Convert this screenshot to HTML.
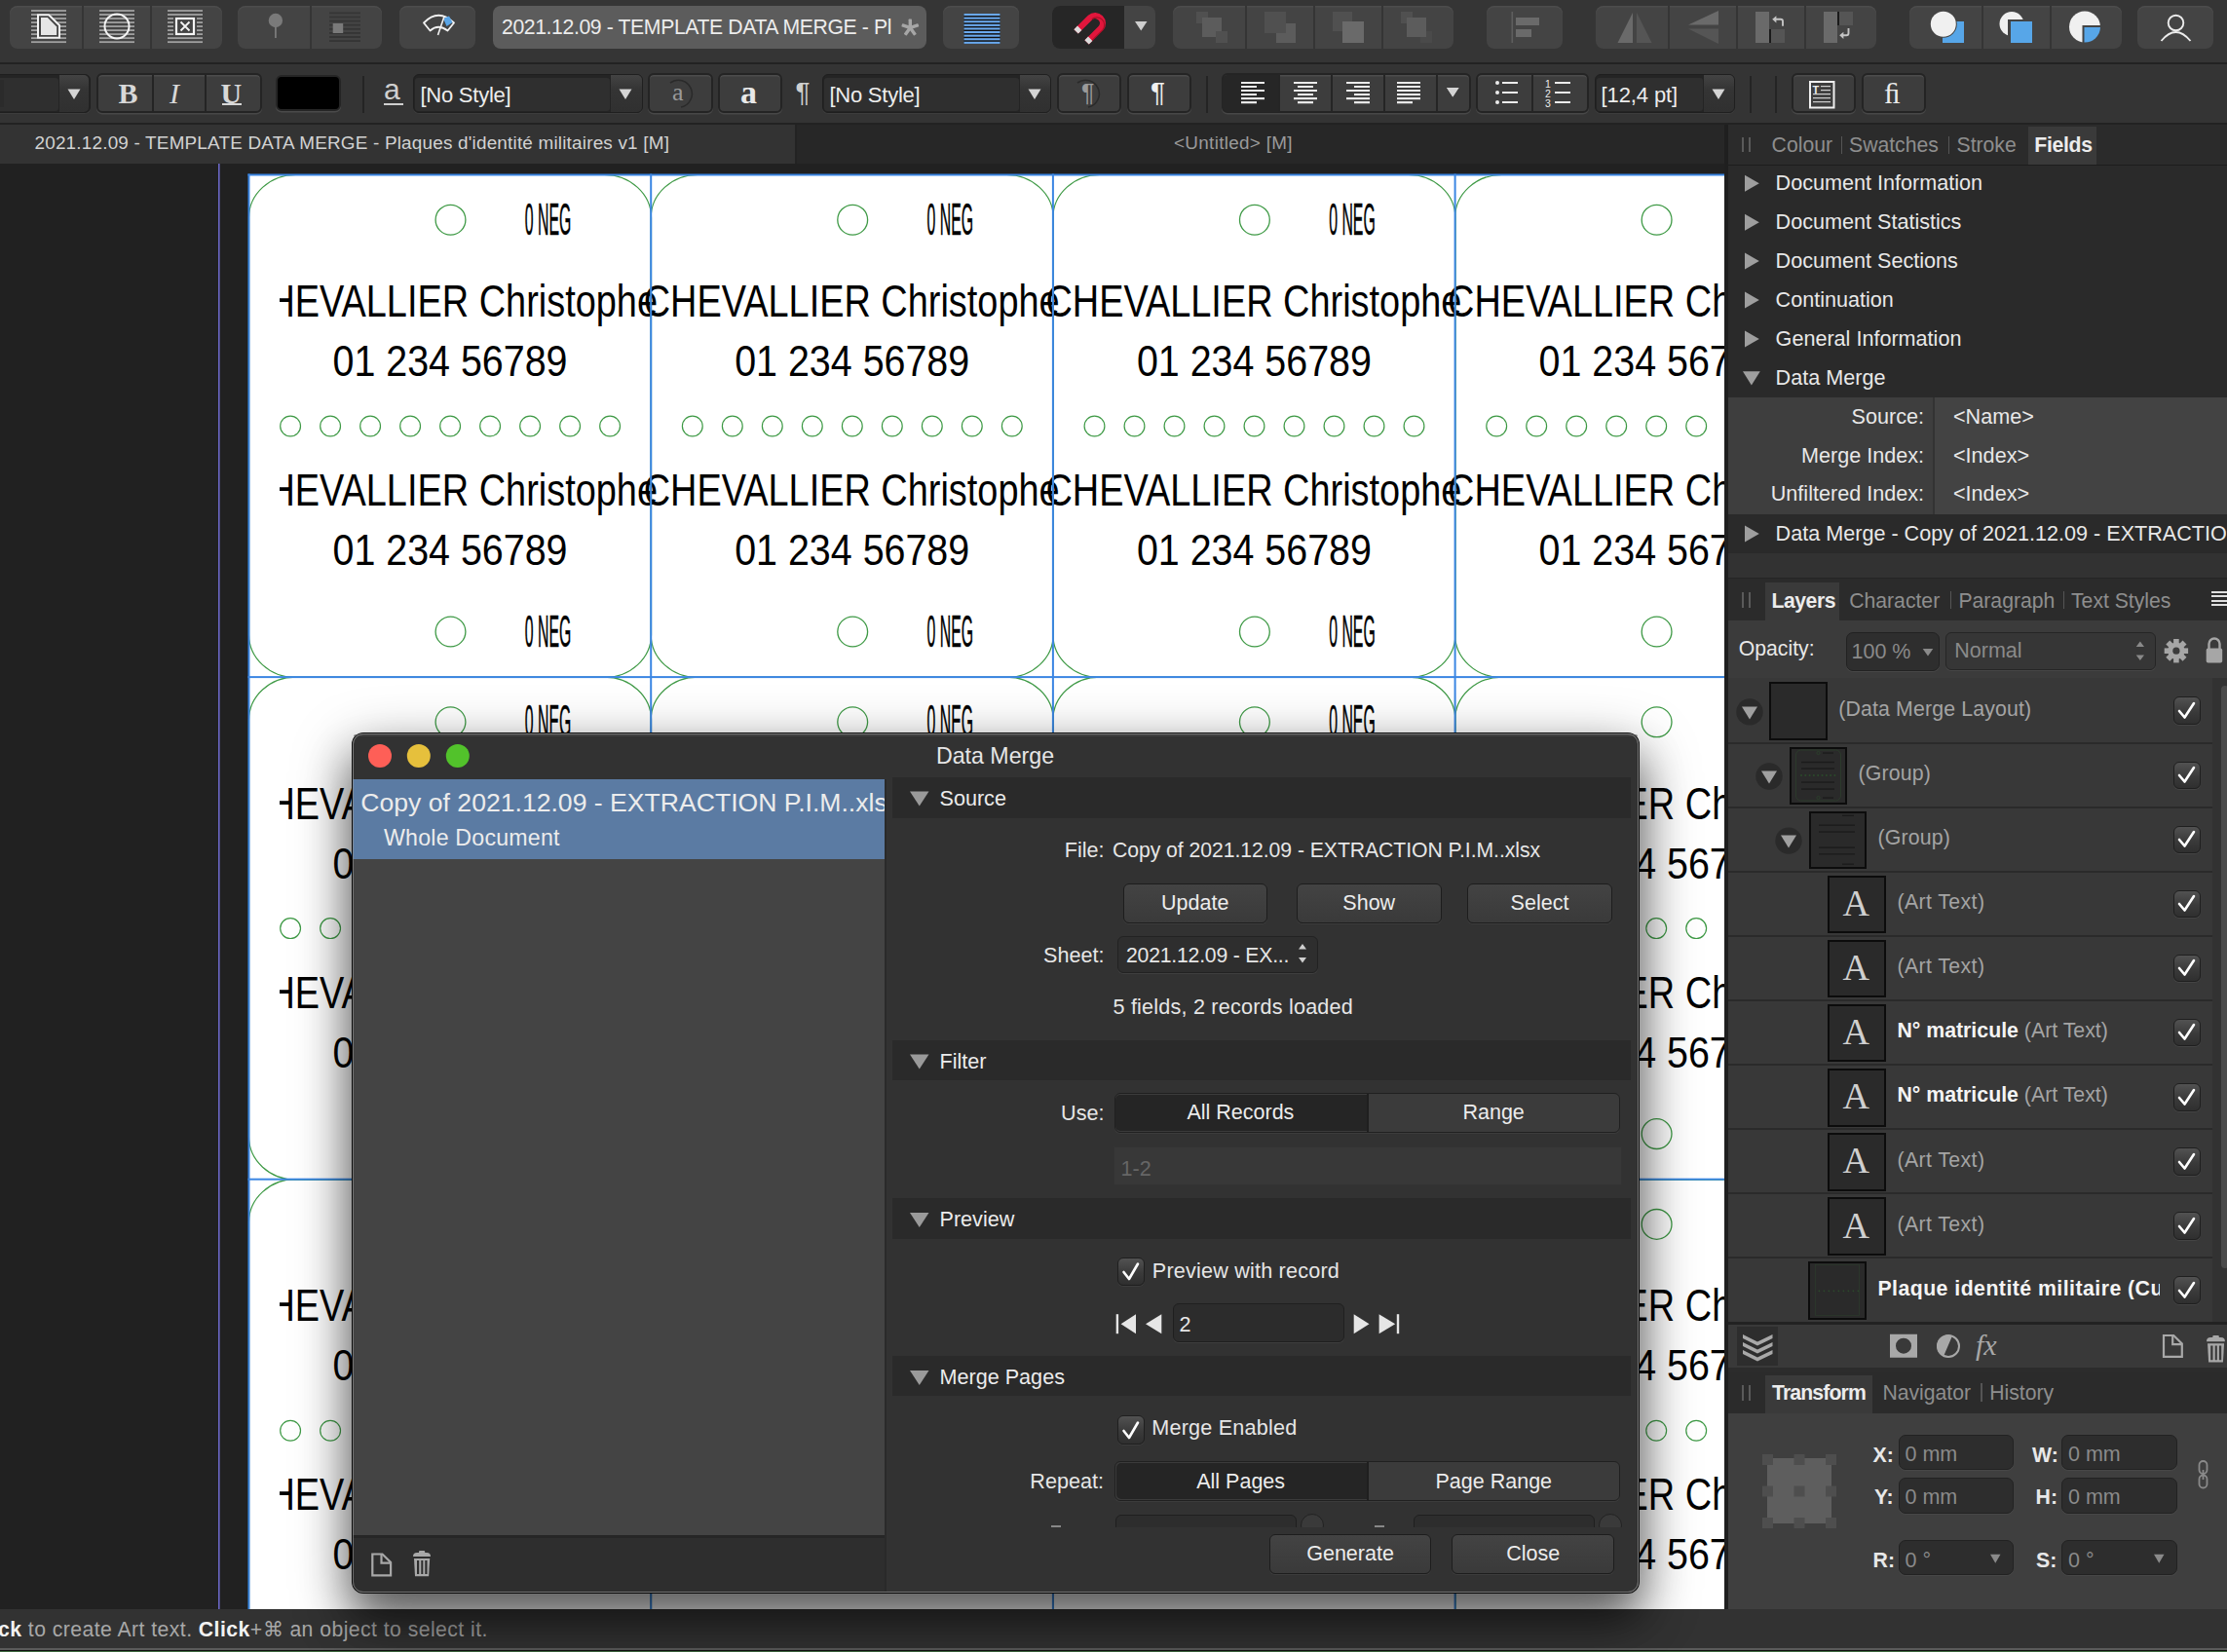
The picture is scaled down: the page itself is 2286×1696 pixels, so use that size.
<!DOCTYPE html>
<html><head><meta charset="utf-8">
<style>
*{box-sizing:border-box;margin:0;padding:0}
html,body{width:2286px;height:1696px;overflow:hidden;background:#2c2c2c;font-family:"Liberation Sans",sans-serif;color:#e6e6e6}
.a{position:absolute}
.t{position:absolute;white-space:nowrap;line-height:1}
</style></head>
<body>
<div class="a" style="left:0;top:0;width:2286px;height:64px;background:#353535"></div>
<div class="a" style="left:0;top:64px;width:2286px;height:2px;background:#222"></div>
<div class="a" style="left:0;top:66px;width:2286px;height:60px;background:#343434"></div>
<div class="a" style="left:0;top:126px;width:2286px;height:2px;background:#222"></div>
<div class="a" style="left:0;top:128px;width:1770px;height:40px;background:#272727"></div>
<div class="a" style="left:0;top:128px;width:816px;height:40px;background:#333333"></div>
<div class="a" style="left:816px;top:128px;width:2px;height:40px;background:#232323"></div>

<svg class="a" style="left:0;top:168px" width="1770" height="1484" viewBox="0 168 1770 1484" font-family="Liberation Sans">
<defs><clipPath id="c1"><rect x="287" y="0" width="2000" height="3000"/></clipPath>
</defs>
<rect x="0" y="168" width="1770" height="1484" fill="#212121"/>
<rect x="224" y="168" width="1.6" height="1484" fill="#6a66c4"/>
<rect x="255.5" y="179.5" width="1600" height="1600" fill="#fff"/>
<circle cx="462.5" cy="225.7" r="15.4" fill="none" stroke="#3f9a46" stroke-width="1.3"/>
<text x="538.8" y="240.5" font-size="45.5" textLength="47.5" lengthAdjust="spacingAndGlyphs" fill="#000" stroke="#000" stroke-width="0.5">0 NEG</text>
<g clip-path="url(#c1)">
<text x="248.0" y="325.1" font-size="46.3" textLength="427" lengthAdjust="spacingAndGlyphs" fill="#000">CHEVALLIER Christophe</text>
<text x="248.0" y="518.9" font-size="46.3" textLength="427" lengthAdjust="spacingAndGlyphs" fill="#000">CHEVALLIER Christophe</text>
</g>
<text x="341.5" y="385.9" font-size="44.5" textLength="241" lengthAdjust="spacingAndGlyphs" fill="#000">01 234 56789</text>
<text x="341.5" y="579.9" font-size="44.5" textLength="241" lengthAdjust="spacingAndGlyphs" fill="#000">01 234 56789</text>
<circle cx="298.1" cy="437.5" r="10.4" fill="none" stroke="#3f9a46" stroke-width="1.2"/>
<circle cx="339.1" cy="437.5" r="10.4" fill="none" stroke="#3f9a46" stroke-width="1.2"/>
<circle cx="380.1" cy="437.5" r="10.4" fill="none" stroke="#3f9a46" stroke-width="1.2"/>
<circle cx="421.1" cy="437.5" r="10.4" fill="none" stroke="#3f9a46" stroke-width="1.2"/>
<circle cx="462.1" cy="437.5" r="10.4" fill="none" stroke="#3f9a46" stroke-width="1.2"/>
<circle cx="503.1" cy="437.5" r="10.4" fill="none" stroke="#3f9a46" stroke-width="1.2"/>
<circle cx="544.1" cy="437.5" r="10.4" fill="none" stroke="#3f9a46" stroke-width="1.2"/>
<circle cx="585.1" cy="437.5" r="10.4" fill="none" stroke="#3f9a46" stroke-width="1.2"/>
<circle cx="626.1" cy="437.5" r="10.4" fill="none" stroke="#3f9a46" stroke-width="1.2"/>
<circle cx="462.5" cy="648.5" r="15.4" fill="none" stroke="#3f9a46" stroke-width="1.3"/>
<text x="538.8" y="663.5" font-size="45.5" textLength="47.5" lengthAdjust="spacingAndGlyphs" fill="#000" stroke="#000" stroke-width="0.5">0 NEG</text>
<rect x="255.5" y="179.5" width="413" height="516" rx="48" ry="44" fill="none" stroke="#3f9a46" stroke-width="1.2"/>
<circle cx="875.2" cy="225.7" r="15.4" fill="none" stroke="#3f9a46" stroke-width="1.3"/>
<text x="951.5" y="240.5" font-size="45.5" textLength="47.5" lengthAdjust="spacingAndGlyphs" fill="#000" stroke="#000" stroke-width="0.5">0 NEG</text>
<g>
<text x="660.7" y="325.1" font-size="46.3" textLength="427" lengthAdjust="spacingAndGlyphs" fill="#000">CHEVALLIER Christophe</text>
<text x="660.7" y="518.9" font-size="46.3" textLength="427" lengthAdjust="spacingAndGlyphs" fill="#000">CHEVALLIER Christophe</text>
</g>
<text x="754.2" y="385.9" font-size="44.5" textLength="241" lengthAdjust="spacingAndGlyphs" fill="#000">01 234 56789</text>
<text x="754.2" y="579.9" font-size="44.5" textLength="241" lengthAdjust="spacingAndGlyphs" fill="#000">01 234 56789</text>
<circle cx="710.8" cy="437.5" r="10.4" fill="none" stroke="#3f9a46" stroke-width="1.2"/>
<circle cx="751.8" cy="437.5" r="10.4" fill="none" stroke="#3f9a46" stroke-width="1.2"/>
<circle cx="792.8" cy="437.5" r="10.4" fill="none" stroke="#3f9a46" stroke-width="1.2"/>
<circle cx="833.8" cy="437.5" r="10.4" fill="none" stroke="#3f9a46" stroke-width="1.2"/>
<circle cx="874.8" cy="437.5" r="10.4" fill="none" stroke="#3f9a46" stroke-width="1.2"/>
<circle cx="915.8" cy="437.5" r="10.4" fill="none" stroke="#3f9a46" stroke-width="1.2"/>
<circle cx="956.8" cy="437.5" r="10.4" fill="none" stroke="#3f9a46" stroke-width="1.2"/>
<circle cx="997.8" cy="437.5" r="10.4" fill="none" stroke="#3f9a46" stroke-width="1.2"/>
<circle cx="1038.8" cy="437.5" r="10.4" fill="none" stroke="#3f9a46" stroke-width="1.2"/>
<circle cx="875.2" cy="648.5" r="15.4" fill="none" stroke="#3f9a46" stroke-width="1.3"/>
<text x="951.5" y="663.5" font-size="45.5" textLength="47.5" lengthAdjust="spacingAndGlyphs" fill="#000" stroke="#000" stroke-width="0.5">0 NEG</text>
<rect x="668.2" y="179.5" width="413" height="516" rx="48" ry="44" fill="none" stroke="#3f9a46" stroke-width="1.2"/>
<circle cx="1287.9" cy="225.7" r="15.4" fill="none" stroke="#3f9a46" stroke-width="1.3"/>
<text x="1364.2" y="240.5" font-size="45.5" textLength="47.5" lengthAdjust="spacingAndGlyphs" fill="#000" stroke="#000" stroke-width="0.5">0 NEG</text>
<g>
<text x="1073.4" y="325.1" font-size="46.3" textLength="427" lengthAdjust="spacingAndGlyphs" fill="#000">CHEVALLIER Christophe</text>
<text x="1073.4" y="518.9" font-size="46.3" textLength="427" lengthAdjust="spacingAndGlyphs" fill="#000">CHEVALLIER Christophe</text>
</g>
<text x="1166.9" y="385.9" font-size="44.5" textLength="241" lengthAdjust="spacingAndGlyphs" fill="#000">01 234 56789</text>
<text x="1166.9" y="579.9" font-size="44.5" textLength="241" lengthAdjust="spacingAndGlyphs" fill="#000">01 234 56789</text>
<circle cx="1123.5" cy="437.5" r="10.4" fill="none" stroke="#3f9a46" stroke-width="1.2"/>
<circle cx="1164.5" cy="437.5" r="10.4" fill="none" stroke="#3f9a46" stroke-width="1.2"/>
<circle cx="1205.5" cy="437.5" r="10.4" fill="none" stroke="#3f9a46" stroke-width="1.2"/>
<circle cx="1246.5" cy="437.5" r="10.4" fill="none" stroke="#3f9a46" stroke-width="1.2"/>
<circle cx="1287.5" cy="437.5" r="10.4" fill="none" stroke="#3f9a46" stroke-width="1.2"/>
<circle cx="1328.5" cy="437.5" r="10.4" fill="none" stroke="#3f9a46" stroke-width="1.2"/>
<circle cx="1369.5" cy="437.5" r="10.4" fill="none" stroke="#3f9a46" stroke-width="1.2"/>
<circle cx="1410.5" cy="437.5" r="10.4" fill="none" stroke="#3f9a46" stroke-width="1.2"/>
<circle cx="1451.5" cy="437.5" r="10.4" fill="none" stroke="#3f9a46" stroke-width="1.2"/>
<circle cx="1287.9" cy="648.5" r="15.4" fill="none" stroke="#3f9a46" stroke-width="1.3"/>
<text x="1364.2" y="663.5" font-size="45.5" textLength="47.5" lengthAdjust="spacingAndGlyphs" fill="#000" stroke="#000" stroke-width="0.5">0 NEG</text>
<rect x="1080.9" y="179.5" width="413" height="516" rx="48" ry="44" fill="none" stroke="#3f9a46" stroke-width="1.2"/>
<circle cx="1700.6" cy="225.7" r="15.4" fill="none" stroke="#3f9a46" stroke-width="1.3"/>
<text x="1776.8999999999999" y="240.5" font-size="45.5" textLength="47.5" lengthAdjust="spacingAndGlyphs" fill="#000" stroke="#000" stroke-width="0.5">0 NEG</text>
<g>
<text x="1486.1" y="325.1" font-size="46.3" textLength="427" lengthAdjust="spacingAndGlyphs" fill="#000">CHEVALLIER Christophe</text>
<text x="1486.1" y="518.9" font-size="46.3" textLength="427" lengthAdjust="spacingAndGlyphs" fill="#000">CHEVALLIER Christophe</text>
</g>
<text x="1579.6" y="385.9" font-size="44.5" textLength="241" lengthAdjust="spacingAndGlyphs" fill="#000">01 234 56789</text>
<text x="1579.6" y="579.9" font-size="44.5" textLength="241" lengthAdjust="spacingAndGlyphs" fill="#000">01 234 56789</text>
<circle cx="1536.2" cy="437.5" r="10.4" fill="none" stroke="#3f9a46" stroke-width="1.2"/>
<circle cx="1577.2" cy="437.5" r="10.4" fill="none" stroke="#3f9a46" stroke-width="1.2"/>
<circle cx="1618.2" cy="437.5" r="10.4" fill="none" stroke="#3f9a46" stroke-width="1.2"/>
<circle cx="1659.2" cy="437.5" r="10.4" fill="none" stroke="#3f9a46" stroke-width="1.2"/>
<circle cx="1700.2" cy="437.5" r="10.4" fill="none" stroke="#3f9a46" stroke-width="1.2"/>
<circle cx="1741.2" cy="437.5" r="10.4" fill="none" stroke="#3f9a46" stroke-width="1.2"/>
<circle cx="1782.2" cy="437.5" r="10.4" fill="none" stroke="#3f9a46" stroke-width="1.2"/>
<circle cx="1823.2" cy="437.5" r="10.4" fill="none" stroke="#3f9a46" stroke-width="1.2"/>
<circle cx="1864.2" cy="437.5" r="10.4" fill="none" stroke="#3f9a46" stroke-width="1.2"/>
<circle cx="1700.6" cy="648.5" r="15.4" fill="none" stroke="#3f9a46" stroke-width="1.3"/>
<text x="1776.8999999999999" y="663.5" font-size="45.5" textLength="47.5" lengthAdjust="spacingAndGlyphs" fill="#000" stroke="#000" stroke-width="0.5">0 NEG</text>
<rect x="1493.6" y="179.5" width="413" height="516" rx="48" ry="44" fill="none" stroke="#3f9a46" stroke-width="1.2"/>
<circle cx="462.5" cy="741.3000000000001" r="15.4" fill="none" stroke="#3f9a46" stroke-width="1.3"/>
<text x="538.8" y="756.1" font-size="45.5" textLength="47.5" lengthAdjust="spacingAndGlyphs" fill="#000" stroke="#000" stroke-width="0.5">0 NEG</text>
<g clip-path="url(#c1)">
<text x="248.0" y="840.7" font-size="46.3" textLength="427" lengthAdjust="spacingAndGlyphs" fill="#000">CHEVALLIER Christophe</text>
<text x="248.0" y="1034.5" font-size="46.3" textLength="427" lengthAdjust="spacingAndGlyphs" fill="#000">CHEVALLIER Christophe</text>
</g>
<text x="341.5" y="901.5" font-size="44.5" textLength="241" lengthAdjust="spacingAndGlyphs" fill="#000">01 234 56789</text>
<text x="341.5" y="1095.5" font-size="44.5" textLength="241" lengthAdjust="spacingAndGlyphs" fill="#000">01 234 56789</text>
<circle cx="298.1" cy="953.1" r="10.4" fill="none" stroke="#3f9a46" stroke-width="1.2"/>
<circle cx="339.1" cy="953.1" r="10.4" fill="none" stroke="#3f9a46" stroke-width="1.2"/>
<circle cx="380.1" cy="953.1" r="10.4" fill="none" stroke="#3f9a46" stroke-width="1.2"/>
<circle cx="421.1" cy="953.1" r="10.4" fill="none" stroke="#3f9a46" stroke-width="1.2"/>
<circle cx="462.1" cy="953.1" r="10.4" fill="none" stroke="#3f9a46" stroke-width="1.2"/>
<circle cx="503.1" cy="953.1" r="10.4" fill="none" stroke="#3f9a46" stroke-width="1.2"/>
<circle cx="544.1" cy="953.1" r="10.4" fill="none" stroke="#3f9a46" stroke-width="1.2"/>
<circle cx="585.1" cy="953.1" r="10.4" fill="none" stroke="#3f9a46" stroke-width="1.2"/>
<circle cx="626.1" cy="953.1" r="10.4" fill="none" stroke="#3f9a46" stroke-width="1.2"/>
<circle cx="462.5" cy="1164.1" r="15.4" fill="none" stroke="#3f9a46" stroke-width="1.3"/>
<text x="538.8" y="1179.1" font-size="45.5" textLength="47.5" lengthAdjust="spacingAndGlyphs" fill="#000" stroke="#000" stroke-width="0.5">0 NEG</text>
<rect x="255.5" y="695.1" width="413" height="516" rx="48" ry="44" fill="none" stroke="#3f9a46" stroke-width="1.2"/>
<circle cx="875.2" cy="741.3000000000001" r="15.4" fill="none" stroke="#3f9a46" stroke-width="1.3"/>
<text x="951.5" y="756.1" font-size="45.5" textLength="47.5" lengthAdjust="spacingAndGlyphs" fill="#000" stroke="#000" stroke-width="0.5">0 NEG</text>
<g>
<text x="660.7" y="840.7" font-size="46.3" textLength="427" lengthAdjust="spacingAndGlyphs" fill="#000">CHEVALLIER Christophe</text>
<text x="660.7" y="1034.5" font-size="46.3" textLength="427" lengthAdjust="spacingAndGlyphs" fill="#000">CHEVALLIER Christophe</text>
</g>
<text x="754.2" y="901.5" font-size="44.5" textLength="241" lengthAdjust="spacingAndGlyphs" fill="#000">01 234 56789</text>
<text x="754.2" y="1095.5" font-size="44.5" textLength="241" lengthAdjust="spacingAndGlyphs" fill="#000">01 234 56789</text>
<circle cx="710.8" cy="953.1" r="10.4" fill="none" stroke="#3f9a46" stroke-width="1.2"/>
<circle cx="751.8" cy="953.1" r="10.4" fill="none" stroke="#3f9a46" stroke-width="1.2"/>
<circle cx="792.8" cy="953.1" r="10.4" fill="none" stroke="#3f9a46" stroke-width="1.2"/>
<circle cx="833.8" cy="953.1" r="10.4" fill="none" stroke="#3f9a46" stroke-width="1.2"/>
<circle cx="874.8" cy="953.1" r="10.4" fill="none" stroke="#3f9a46" stroke-width="1.2"/>
<circle cx="915.8" cy="953.1" r="10.4" fill="none" stroke="#3f9a46" stroke-width="1.2"/>
<circle cx="956.8" cy="953.1" r="10.4" fill="none" stroke="#3f9a46" stroke-width="1.2"/>
<circle cx="997.8" cy="953.1" r="10.4" fill="none" stroke="#3f9a46" stroke-width="1.2"/>
<circle cx="1038.8" cy="953.1" r="10.4" fill="none" stroke="#3f9a46" stroke-width="1.2"/>
<circle cx="875.2" cy="1164.1" r="15.4" fill="none" stroke="#3f9a46" stroke-width="1.3"/>
<text x="951.5" y="1179.1" font-size="45.5" textLength="47.5" lengthAdjust="spacingAndGlyphs" fill="#000" stroke="#000" stroke-width="0.5">0 NEG</text>
<rect x="668.2" y="695.1" width="413" height="516" rx="48" ry="44" fill="none" stroke="#3f9a46" stroke-width="1.2"/>
<circle cx="1287.9" cy="741.3000000000001" r="15.4" fill="none" stroke="#3f9a46" stroke-width="1.3"/>
<text x="1364.2" y="756.1" font-size="45.5" textLength="47.5" lengthAdjust="spacingAndGlyphs" fill="#000" stroke="#000" stroke-width="0.5">0 NEG</text>
<g>
<text x="1073.4" y="840.7" font-size="46.3" textLength="427" lengthAdjust="spacingAndGlyphs" fill="#000">CHEVALLIER Christophe</text>
<text x="1073.4" y="1034.5" font-size="46.3" textLength="427" lengthAdjust="spacingAndGlyphs" fill="#000">CHEVALLIER Christophe</text>
</g>
<text x="1166.9" y="901.5" font-size="44.5" textLength="241" lengthAdjust="spacingAndGlyphs" fill="#000">01 234 56789</text>
<text x="1166.9" y="1095.5" font-size="44.5" textLength="241" lengthAdjust="spacingAndGlyphs" fill="#000">01 234 56789</text>
<circle cx="1123.5" cy="953.1" r="10.4" fill="none" stroke="#3f9a46" stroke-width="1.2"/>
<circle cx="1164.5" cy="953.1" r="10.4" fill="none" stroke="#3f9a46" stroke-width="1.2"/>
<circle cx="1205.5" cy="953.1" r="10.4" fill="none" stroke="#3f9a46" stroke-width="1.2"/>
<circle cx="1246.5" cy="953.1" r="10.4" fill="none" stroke="#3f9a46" stroke-width="1.2"/>
<circle cx="1287.5" cy="953.1" r="10.4" fill="none" stroke="#3f9a46" stroke-width="1.2"/>
<circle cx="1328.5" cy="953.1" r="10.4" fill="none" stroke="#3f9a46" stroke-width="1.2"/>
<circle cx="1369.5" cy="953.1" r="10.4" fill="none" stroke="#3f9a46" stroke-width="1.2"/>
<circle cx="1410.5" cy="953.1" r="10.4" fill="none" stroke="#3f9a46" stroke-width="1.2"/>
<circle cx="1451.5" cy="953.1" r="10.4" fill="none" stroke="#3f9a46" stroke-width="1.2"/>
<circle cx="1287.9" cy="1164.1" r="15.4" fill="none" stroke="#3f9a46" stroke-width="1.3"/>
<text x="1364.2" y="1179.1" font-size="45.5" textLength="47.5" lengthAdjust="spacingAndGlyphs" fill="#000" stroke="#000" stroke-width="0.5">0 NEG</text>
<rect x="1080.9" y="695.1" width="413" height="516" rx="48" ry="44" fill="none" stroke="#3f9a46" stroke-width="1.2"/>
<circle cx="1700.6" cy="741.3000000000001" r="15.4" fill="none" stroke="#3f9a46" stroke-width="1.3"/>
<text x="1776.8999999999999" y="756.1" font-size="45.5" textLength="47.5" lengthAdjust="spacingAndGlyphs" fill="#000" stroke="#000" stroke-width="0.5">0 NEG</text>
<g>
<text x="1486.1" y="840.7" font-size="46.3" textLength="427" lengthAdjust="spacingAndGlyphs" fill="#000">CHEVALLIER Christophe</text>
<text x="1486.1" y="1034.5" font-size="46.3" textLength="427" lengthAdjust="spacingAndGlyphs" fill="#000">CHEVALLIER Christophe</text>
</g>
<text x="1579.6" y="901.5" font-size="44.5" textLength="241" lengthAdjust="spacingAndGlyphs" fill="#000">01 234 56789</text>
<text x="1579.6" y="1095.5" font-size="44.5" textLength="241" lengthAdjust="spacingAndGlyphs" fill="#000">01 234 56789</text>
<circle cx="1536.2" cy="953.1" r="10.4" fill="none" stroke="#3f9a46" stroke-width="1.2"/>
<circle cx="1577.2" cy="953.1" r="10.4" fill="none" stroke="#3f9a46" stroke-width="1.2"/>
<circle cx="1618.2" cy="953.1" r="10.4" fill="none" stroke="#3f9a46" stroke-width="1.2"/>
<circle cx="1659.2" cy="953.1" r="10.4" fill="none" stroke="#3f9a46" stroke-width="1.2"/>
<circle cx="1700.2" cy="953.1" r="10.4" fill="none" stroke="#3f9a46" stroke-width="1.2"/>
<circle cx="1741.2" cy="953.1" r="10.4" fill="none" stroke="#3f9a46" stroke-width="1.2"/>
<circle cx="1782.2" cy="953.1" r="10.4" fill="none" stroke="#3f9a46" stroke-width="1.2"/>
<circle cx="1823.2" cy="953.1" r="10.4" fill="none" stroke="#3f9a46" stroke-width="1.2"/>
<circle cx="1864.2" cy="953.1" r="10.4" fill="none" stroke="#3f9a46" stroke-width="1.2"/>
<circle cx="1700.6" cy="1164.1" r="15.4" fill="none" stroke="#3f9a46" stroke-width="1.3"/>
<text x="1776.8999999999999" y="1179.1" font-size="45.5" textLength="47.5" lengthAdjust="spacingAndGlyphs" fill="#000" stroke="#000" stroke-width="0.5">0 NEG</text>
<rect x="1493.6" y="695.1" width="413" height="516" rx="48" ry="44" fill="none" stroke="#3f9a46" stroke-width="1.2"/>
<circle cx="462.5" cy="1256.9" r="15.4" fill="none" stroke="#3f9a46" stroke-width="1.3"/>
<text x="538.8" y="1271.7" font-size="45.5" textLength="47.5" lengthAdjust="spacingAndGlyphs" fill="#000" stroke="#000" stroke-width="0.5">0 NEG</text>
<g clip-path="url(#c1)">
<text x="248.0" y="1356.3" font-size="46.3" textLength="427" lengthAdjust="spacingAndGlyphs" fill="#000">CHEVALLIER Christophe</text>
<text x="248.0" y="1550.1" font-size="46.3" textLength="427" lengthAdjust="spacingAndGlyphs" fill="#000">CHEVALLIER Christophe</text>
</g>
<text x="341.5" y="1417.1000000000001" font-size="44.5" textLength="241" lengthAdjust="spacingAndGlyphs" fill="#000">01 234 56789</text>
<text x="341.5" y="1611.1" font-size="44.5" textLength="241" lengthAdjust="spacingAndGlyphs" fill="#000">01 234 56789</text>
<circle cx="298.1" cy="1468.7" r="10.4" fill="none" stroke="#3f9a46" stroke-width="1.2"/>
<circle cx="339.1" cy="1468.7" r="10.4" fill="none" stroke="#3f9a46" stroke-width="1.2"/>
<circle cx="380.1" cy="1468.7" r="10.4" fill="none" stroke="#3f9a46" stroke-width="1.2"/>
<circle cx="421.1" cy="1468.7" r="10.4" fill="none" stroke="#3f9a46" stroke-width="1.2"/>
<circle cx="462.1" cy="1468.7" r="10.4" fill="none" stroke="#3f9a46" stroke-width="1.2"/>
<circle cx="503.1" cy="1468.7" r="10.4" fill="none" stroke="#3f9a46" stroke-width="1.2"/>
<circle cx="544.1" cy="1468.7" r="10.4" fill="none" stroke="#3f9a46" stroke-width="1.2"/>
<circle cx="585.1" cy="1468.7" r="10.4" fill="none" stroke="#3f9a46" stroke-width="1.2"/>
<circle cx="626.1" cy="1468.7" r="10.4" fill="none" stroke="#3f9a46" stroke-width="1.2"/>
<circle cx="462.5" cy="1679.7" r="15.4" fill="none" stroke="#3f9a46" stroke-width="1.3"/>
<text x="538.8" y="1694.7" font-size="45.5" textLength="47.5" lengthAdjust="spacingAndGlyphs" fill="#000" stroke="#000" stroke-width="0.5">0 NEG</text>
<rect x="255.5" y="1210.7" width="413" height="516" rx="48" ry="44" fill="none" stroke="#3f9a46" stroke-width="1.2"/>
<circle cx="875.2" cy="1256.9" r="15.4" fill="none" stroke="#3f9a46" stroke-width="1.3"/>
<text x="951.5" y="1271.7" font-size="45.5" textLength="47.5" lengthAdjust="spacingAndGlyphs" fill="#000" stroke="#000" stroke-width="0.5">0 NEG</text>
<g>
<text x="660.7" y="1356.3" font-size="46.3" textLength="427" lengthAdjust="spacingAndGlyphs" fill="#000">CHEVALLIER Christophe</text>
<text x="660.7" y="1550.1" font-size="46.3" textLength="427" lengthAdjust="spacingAndGlyphs" fill="#000">CHEVALLIER Christophe</text>
</g>
<text x="754.2" y="1417.1000000000001" font-size="44.5" textLength="241" lengthAdjust="spacingAndGlyphs" fill="#000">01 234 56789</text>
<text x="754.2" y="1611.1" font-size="44.5" textLength="241" lengthAdjust="spacingAndGlyphs" fill="#000">01 234 56789</text>
<circle cx="710.8" cy="1468.7" r="10.4" fill="none" stroke="#3f9a46" stroke-width="1.2"/>
<circle cx="751.8" cy="1468.7" r="10.4" fill="none" stroke="#3f9a46" stroke-width="1.2"/>
<circle cx="792.8" cy="1468.7" r="10.4" fill="none" stroke="#3f9a46" stroke-width="1.2"/>
<circle cx="833.8" cy="1468.7" r="10.4" fill="none" stroke="#3f9a46" stroke-width="1.2"/>
<circle cx="874.8" cy="1468.7" r="10.4" fill="none" stroke="#3f9a46" stroke-width="1.2"/>
<circle cx="915.8" cy="1468.7" r="10.4" fill="none" stroke="#3f9a46" stroke-width="1.2"/>
<circle cx="956.8" cy="1468.7" r="10.4" fill="none" stroke="#3f9a46" stroke-width="1.2"/>
<circle cx="997.8" cy="1468.7" r="10.4" fill="none" stroke="#3f9a46" stroke-width="1.2"/>
<circle cx="1038.8" cy="1468.7" r="10.4" fill="none" stroke="#3f9a46" stroke-width="1.2"/>
<circle cx="875.2" cy="1679.7" r="15.4" fill="none" stroke="#3f9a46" stroke-width="1.3"/>
<text x="951.5" y="1694.7" font-size="45.5" textLength="47.5" lengthAdjust="spacingAndGlyphs" fill="#000" stroke="#000" stroke-width="0.5">0 NEG</text>
<rect x="668.2" y="1210.7" width="413" height="516" rx="48" ry="44" fill="none" stroke="#3f9a46" stroke-width="1.2"/>
<circle cx="1287.9" cy="1256.9" r="15.4" fill="none" stroke="#3f9a46" stroke-width="1.3"/>
<text x="1364.2" y="1271.7" font-size="45.5" textLength="47.5" lengthAdjust="spacingAndGlyphs" fill="#000" stroke="#000" stroke-width="0.5">0 NEG</text>
<g>
<text x="1073.4" y="1356.3" font-size="46.3" textLength="427" lengthAdjust="spacingAndGlyphs" fill="#000">CHEVALLIER Christophe</text>
<text x="1073.4" y="1550.1" font-size="46.3" textLength="427" lengthAdjust="spacingAndGlyphs" fill="#000">CHEVALLIER Christophe</text>
</g>
<text x="1166.9" y="1417.1000000000001" font-size="44.5" textLength="241" lengthAdjust="spacingAndGlyphs" fill="#000">01 234 56789</text>
<text x="1166.9" y="1611.1" font-size="44.5" textLength="241" lengthAdjust="spacingAndGlyphs" fill="#000">01 234 56789</text>
<circle cx="1123.5" cy="1468.7" r="10.4" fill="none" stroke="#3f9a46" stroke-width="1.2"/>
<circle cx="1164.5" cy="1468.7" r="10.4" fill="none" stroke="#3f9a46" stroke-width="1.2"/>
<circle cx="1205.5" cy="1468.7" r="10.4" fill="none" stroke="#3f9a46" stroke-width="1.2"/>
<circle cx="1246.5" cy="1468.7" r="10.4" fill="none" stroke="#3f9a46" stroke-width="1.2"/>
<circle cx="1287.5" cy="1468.7" r="10.4" fill="none" stroke="#3f9a46" stroke-width="1.2"/>
<circle cx="1328.5" cy="1468.7" r="10.4" fill="none" stroke="#3f9a46" stroke-width="1.2"/>
<circle cx="1369.5" cy="1468.7" r="10.4" fill="none" stroke="#3f9a46" stroke-width="1.2"/>
<circle cx="1410.5" cy="1468.7" r="10.4" fill="none" stroke="#3f9a46" stroke-width="1.2"/>
<circle cx="1451.5" cy="1468.7" r="10.4" fill="none" stroke="#3f9a46" stroke-width="1.2"/>
<circle cx="1287.9" cy="1679.7" r="15.4" fill="none" stroke="#3f9a46" stroke-width="1.3"/>
<text x="1364.2" y="1694.7" font-size="45.5" textLength="47.5" lengthAdjust="spacingAndGlyphs" fill="#000" stroke="#000" stroke-width="0.5">0 NEG</text>
<rect x="1080.9" y="1210.7" width="413" height="516" rx="48" ry="44" fill="none" stroke="#3f9a46" stroke-width="1.2"/>
<circle cx="1700.6" cy="1256.9" r="15.4" fill="none" stroke="#3f9a46" stroke-width="1.3"/>
<text x="1776.8999999999999" y="1271.7" font-size="45.5" textLength="47.5" lengthAdjust="spacingAndGlyphs" fill="#000" stroke="#000" stroke-width="0.5">0 NEG</text>
<g>
<text x="1486.1" y="1356.3" font-size="46.3" textLength="427" lengthAdjust="spacingAndGlyphs" fill="#000">CHEVALLIER Christophe</text>
<text x="1486.1" y="1550.1" font-size="46.3" textLength="427" lengthAdjust="spacingAndGlyphs" fill="#000">CHEVALLIER Christophe</text>
</g>
<text x="1579.6" y="1417.1000000000001" font-size="44.5" textLength="241" lengthAdjust="spacingAndGlyphs" fill="#000">01 234 56789</text>
<text x="1579.6" y="1611.1" font-size="44.5" textLength="241" lengthAdjust="spacingAndGlyphs" fill="#000">01 234 56789</text>
<circle cx="1536.2" cy="1468.7" r="10.4" fill="none" stroke="#3f9a46" stroke-width="1.2"/>
<circle cx="1577.2" cy="1468.7" r="10.4" fill="none" stroke="#3f9a46" stroke-width="1.2"/>
<circle cx="1618.2" cy="1468.7" r="10.4" fill="none" stroke="#3f9a46" stroke-width="1.2"/>
<circle cx="1659.2" cy="1468.7" r="10.4" fill="none" stroke="#3f9a46" stroke-width="1.2"/>
<circle cx="1700.2" cy="1468.7" r="10.4" fill="none" stroke="#3f9a46" stroke-width="1.2"/>
<circle cx="1741.2" cy="1468.7" r="10.4" fill="none" stroke="#3f9a46" stroke-width="1.2"/>
<circle cx="1782.2" cy="1468.7" r="10.4" fill="none" stroke="#3f9a46" stroke-width="1.2"/>
<circle cx="1823.2" cy="1468.7" r="10.4" fill="none" stroke="#3f9a46" stroke-width="1.2"/>
<circle cx="1864.2" cy="1468.7" r="10.4" fill="none" stroke="#3f9a46" stroke-width="1.2"/>
<circle cx="1700.6" cy="1679.7" r="15.4" fill="none" stroke="#3f9a46" stroke-width="1.3"/>
<text x="1776.8999999999999" y="1694.7" font-size="45.5" textLength="47.5" lengthAdjust="spacingAndGlyphs" fill="#000" stroke="#000" stroke-width="0.5">0 NEG</text>
<rect x="1493.6" y="1210.7" width="413" height="516" rx="48" ry="44" fill="none" stroke="#3f9a46" stroke-width="1.2"/>
<rect x="254.5" y="178.5" width="2" height="1600" fill="#3b86e3"/>
<rect x="667.2" y="178.5" width="2" height="1600" fill="#3b86e3"/>
<rect x="1079.9" y="178.5" width="2" height="1600" fill="#3b86e3"/>
<rect x="1492.6" y="178.5" width="2" height="1600" fill="#3b86e3"/>
<rect x="254.5" y="178.5" width="1600" height="2" fill="#3b86e3"/>
<rect x="254.5" y="694.1" width="1600" height="2" fill="#3b86e3"/>
<rect x="254.5" y="1209.7" width="1600" height="2" fill="#3b86e3"/>
</svg>
<div class="a" style="left:10px;top:6px;width:218px;height:43.5px;background:#444444;border-radius:8px;box-shadow:inset 0 1.5px 0 #4c4c4c"></div>
<div class="a" style="left:84px;top:6px;width:2px;height:43.5px;background:#353535;border-radius:0px;"></div>
<div class="a" style="left:154px;top:6px;width:2px;height:43.5px;background:#353535;border-radius:0px;"></div>
<div class="a" style="left:244px;top:6px;width:148px;height:43.5px;background:#444444;border-radius:8px;box-shadow:inset 0 1.5px 0 #4c4c4c"></div>
<div class="a" style="left:318px;top:6px;width:2px;height:43.5px;background:#353535;border-radius:0px;"></div>
<div class="a" style="left:410px;top:6px;width:78px;height:43.5px;background:#444444;border-radius:8px;box-shadow:inset 0 1.5px 0 #4c4c4c"></div>
<div class="a" style="left:506px;top:6px;width:445px;height:43.5px;background:#5c5c5c;border-radius:8px;"></div>
<div class="t" style="left:515px;top:17.35px;font-size:21.2px;color:#ececec;font-weight:normal;letter-spacing:-0.38px">2021.12.09 - TEMPLATE DATA MERGE - Pl</div>
<svg class="a" style="left:920px;top:14px;" width="30" height="30" viewBox="920 14 30 30"><rect x="932.6" y="19.5" width="3.4" height="9.5" rx="0.8" fill="#a6a6a6" transform="rotate(0 934.3 28.5)"/><rect x="932.6" y="19.5" width="3.4" height="9.5" rx="0.8" fill="#a6a6a6" transform="rotate(72 934.3 28.5)"/><rect x="932.6" y="19.5" width="3.4" height="9.5" rx="0.8" fill="#a6a6a6" transform="rotate(144 934.3 28.5)"/><rect x="932.6" y="19.5" width="3.4" height="9.5" rx="0.8" fill="#a6a6a6" transform="rotate(216 934.3 28.5)"/><rect x="932.6" y="19.5" width="3.4" height="9.5" rx="0.8" fill="#a6a6a6" transform="rotate(288 934.3 28.5)"/></svg>
<div class="a" style="left:968px;top:6px;width:78px;height:43.5px;background:#444444;border-radius:8px;box-shadow:inset 0 1.5px 0 #4c4c4c"></div>
<div class="a" style="left:1080px;top:6px;width:106px;height:43.5px;background:#444444;border-radius:8px;"></div>
<div class="a" style="left:1080px;top:6px;width:74px;height:43.5px;background:#262626;border-radius:8px;border-top-right-radius:0;border-bottom-right-radius:0"></div>
<div class="a" style="left:1204px;top:6px;width:288px;height:43.5px;background:#444444;border-radius:8px;box-shadow:inset 0 1.5px 0 #4c4c4c"></div>
<div class="a" style="left:1277.5px;top:6px;width:2.0px;height:43.5px;background:#353535;border-radius:0px;"></div>
<div class="a" style="left:1347.5px;top:6px;width:2.0px;height:43.5px;background:#353535;border-radius:0px;"></div>
<div class="a" style="left:1417.5px;top:6px;width:2.0px;height:43.5px;background:#353535;border-radius:0px;"></div>
<div class="a" style="left:1526px;top:6px;width:78px;height:43.5px;background:#444444;border-radius:8px;box-shadow:inset 0 1.5px 0 #4c4c4c"></div>
<div class="a" style="left:1638px;top:6px;width:288px;height:43.5px;background:#444444;border-radius:8px;box-shadow:inset 0 1.5px 0 #4c4c4c"></div>
<div class="a" style="left:1712px;top:6px;width:2px;height:43.5px;background:#353535;border-radius:0px;"></div>
<div class="a" style="left:1782px;top:6px;width:2px;height:43.5px;background:#353535;border-radius:0px;"></div>
<div class="a" style="left:1852px;top:6px;width:2px;height:43.5px;background:#353535;border-radius:0px;"></div>
<div class="a" style="left:1960px;top:6px;width:218px;height:43.5px;background:#444444;border-radius:8px;box-shadow:inset 0 1.5px 0 #4c4c4c"></div>
<div class="a" style="left:2034px;top:6px;width:2px;height:43.5px;background:#353535;border-radius:0px;"></div>
<div class="a" style="left:2104px;top:6px;width:2px;height:43.5px;background:#353535;border-radius:0px;"></div>
<div class="a" style="left:2194px;top:6px;width:78px;height:43.5px;background:#444444;border-radius:8px;box-shadow:inset 0 1.5px 0 #4c4c4c"></div>
<svg class="a" style="left:0px;top:0px;" width="2286" height="64" viewBox="0 0 2286 64"><rect x="32" y="10.10" width="36" height="1.8" fill="#a0a0a0"/><rect x="32" y="14.12" width="36" height="1.8" fill="#a0a0a0"/><rect x="32" y="18.14" width="36" height="1.8" fill="#a0a0a0"/><rect x="32" y="22.16" width="36" height="1.8" fill="#a0a0a0"/><rect x="32" y="26.18" width="36" height="1.8" fill="#a0a0a0"/><rect x="32" y="30.20" width="36" height="1.8" fill="#a0a0a0"/><rect x="32" y="34.22" width="36" height="1.8" fill="#a0a0a0"/><rect x="32" y="38.24" width="36" height="1.8" fill="#a0a0a0"/><rect x="32" y="42.26" width="36" height="1.8" fill="#a0a0a0"/><rect x="102" y="10.10" width="36" height="1.8" fill="#a0a0a0"/><rect x="102" y="14.12" width="36" height="1.8" fill="#a0a0a0"/><rect x="102" y="18.14" width="36" height="1.8" fill="#a0a0a0"/><rect x="102" y="22.16" width="36" height="1.8" fill="#a0a0a0"/><rect x="102" y="26.18" width="36" height="1.8" fill="#a0a0a0"/><rect x="102" y="30.20" width="36" height="1.8" fill="#a0a0a0"/><rect x="102" y="34.22" width="36" height="1.8" fill="#a0a0a0"/><rect x="102" y="38.24" width="36" height="1.8" fill="#a0a0a0"/><rect x="102" y="42.26" width="36" height="1.8" fill="#a0a0a0"/><rect x="172" y="10.10" width="36" height="1.8" fill="#a0a0a0"/><rect x="172" y="14.12" width="36" height="1.8" fill="#a0a0a0"/><rect x="172" y="18.14" width="36" height="1.8" fill="#a0a0a0"/><rect x="172" y="22.16" width="36" height="1.8" fill="#a0a0a0"/><rect x="172" y="26.18" width="36" height="1.8" fill="#a0a0a0"/><rect x="172" y="30.20" width="36" height="1.8" fill="#a0a0a0"/><rect x="172" y="34.22" width="36" height="1.8" fill="#a0a0a0"/><rect x="172" y="38.24" width="36" height="1.8" fill="#a0a0a0"/><rect x="172" y="42.26" width="36" height="1.8" fill="#a0a0a0"/><path d="M38 14.2 H50.5 L62 25.6 V39.7 H38 Z" fill="#444"/><path d="M39 15.2 H50.1 L61 26 V38.7 H39 Z" fill="none" stroke="#f4f4f4" stroke-width="2"/><path d="M42 18 H48.8 L58.2 27.4 V35.9 H42 Z" fill="#e6e6e6"/><circle cx="120" cy="26.9" r="12.5" fill="none" stroke="#f4f4f4" stroke-width="2"/><rect x="178" y="16" width="24" height="22" fill="#444"/><rect x="181" y="19" width="18" height="16" fill="#444" stroke="#f4f4f4" stroke-width="2.2"/><path d="M185.5 22.5 L194.5 31.5 M194.5 22.5 L185.5 31.5" stroke="#f4f4f4" stroke-width="1.8"/><circle cx="282.9" cy="21" r="7.2" fill="#7a7a7a"/><rect x="282" y="26" width="1.8" height="13" fill="#7a7a7a"/><rect x="338" y="12.50" width="32" height="1.8" fill="#353535"/><rect x="338" y="16.60" width="32" height="1.8" fill="#353535"/><rect x="338" y="20.70" width="32" height="1.8" fill="#353535"/><rect x="338" y="24.80" width="32" height="1.8" fill="#353535"/><rect x="338" y="28.90" width="32" height="1.8" fill="#353535"/><rect x="338" y="33.00" width="32" height="1.8" fill="#353535"/><rect x="338" y="37.10" width="32" height="1.8" fill="#353535"/><rect x="338" y="41.20" width="32" height="1.8" fill="#353535"/><rect x="341.7" y="24" width="10.5" height="10" fill="#7a7a7a"/><path d="M435 23.5 Q450 8 466 23.5 L459.5 31.5 Q450 24 441.5 31.5 Z" fill="none" stroke="#f2f2f2" stroke-width="1.8" stroke-linejoin="round"/><path d="M455 19 L461 16.5 L464.5 23 L458.5 27 Z" fill="#5aa5e6"/><path d="M449.5 36 L456 17" stroke="#f2f2f2" stroke-width="1.6"/><rect x="989.5" y="14" width="37" height="31" fill="#111"/><rect x="989.5" y="14.00" width="37.0" height="2.1" fill="#6aa9ee"/><rect x="989.5" y="17.60" width="37.0" height="2.1" fill="#6aa9ee"/><rect x="989.5" y="21.20" width="37.0" height="2.1" fill="#6aa9ee"/><rect x="989.5" y="24.80" width="37.0" height="2.1" fill="#6aa9ee"/><rect x="989.5" y="28.40" width="37.0" height="2.1" fill="#6aa9ee"/><rect x="989.5" y="32.00" width="37.0" height="2.1" fill="#6aa9ee"/><rect x="989.5" y="35.60" width="37.0" height="2.1" fill="#6aa9ee"/><rect x="989.5" y="39.20" width="37.0" height="2.1" fill="#6aa9ee"/><rect x="989.5" y="42.80" width="37.0" height="2.1" fill="#6aa9ee"/><path d="M1104.6 32.4 L1119 18 A7.8 7.8 0 0 1 1130 29 L1115.6 43.4" fill="none" stroke="#e2163c" stroke-width="6.2"/><path d="M1119 18 A7.8 7.8 0 0 1 1130 29 L1115.6 43.4" fill="none" stroke="#9a0e22" stroke-width="1.2" transform="translate(1.8,1.8)" opacity="0.8"/><path d="M1104.6 32.4 L1108.2 28.8 M1115.6 43.4 L1119.2 39.8" stroke="#dcdcdc" stroke-width="6.2"/><path d="M1165 22 H1177.5 L1171.25 31.5 Z" fill="#cfcfcf"/><rect x="1228" y="12" width="12" height="12" fill="#505050"/><rect x="1234" y="18" width="20" height="20" fill="#5c5c5c"/><rect x="1248" y="32" width="12" height="12" fill="#505050"/><rect x="1298" y="12" width="22" height="22" fill="#505050"/><rect x="1310" y="24" width="20" height="20" fill="#5c5c5c"/><rect x="1310" y="24" width="10" height="10" fill="#444"/><rect x="1298" y="12" width="22" height="22" fill="#505050"/><rect x="1368" y="12" width="20" height="20" fill="#505050"/><rect x="1378" y="22" width="22" height="22" fill="#6a6a6a"/><rect x="1438" y="12" width="12" height="12" fill="#505050"/><rect x="1444" y="18" width="20" height="20" fill="#5c5c5c"/><rect x="1458" y="32" width="12" height="12" fill="#4a4a4a"/><rect x="1444" y="18" width="20" height="20" fill="#5c5c5c"/><rect x="1551.5" y="12" width="1.6" height="32" fill="#5e5e5e"/><rect x="1556" y="18" width="24" height="8" fill="#6a6a6a"/><rect x="1556" y="30" width="16" height="8" fill="#6a6a6a"/><path d="M1676 13 V44 H1660.5 Z" fill="#6a6a6a"/><path d="M1680 13 L1695.5 44 H1680 Z" fill="#555"/><path d="M1764 11 V25.5 H1733 Z" fill="#6a6a6a"/><path d="M1764 29.5 V45 L1733 29.5 Z" fill="#555"/><rect x="1802" y="12" width="14" height="32" fill="#6a6a6a"/><rect x="1816" y="30" width="2" height="14" fill="#1a1a1a"/><rect x="1818" y="30" width="14" height="14" fill="#555"/><path d="M1830 26.8 V22 Q1830 19.8 1827.8 19.8 H1822.5" fill="none" stroke="#c4c4c4" stroke-width="1.9"/><path d="M1819.2 19.8 l4.2 -3.6 v7.2 z" fill="#c4c4c4"/><rect x="1872" y="12" width="14" height="32" fill="#6a6a6a"/><rect x="1886" y="12" width="2" height="14" fill="#1a1a1a"/><rect x="1888" y="12" width="14" height="14" fill="#555"/><path d="M1897.5 29 V34 Q1897.5 36.3 1895.3 36.3 H1891.5" fill="none" stroke="#c4c4c4" stroke-width="1.9"/><path d="M1888.2 36.3 l4.2 -3.6 v7.2 z" fill="#c4c4c4"/><rect x="1994" y="22" width="22" height="22" fill="#57a6e8"/><circle cx="1994.8" cy="24.8" r="14" fill="#444"/><circle cx="1994.8" cy="24.8" r="13" fill="#f0f0f0"/><circle cx="2065" cy="24.5" r="12.5" fill="#f0f0f0"/><rect x="2061" y="20" width="25.5" height="24.5" fill="#444"/><rect x="2064" y="22" width="22" height="22" fill="#57a6e8"/><circle cx="2140" cy="27.5" r="16" fill="#f0f0f0"/><rect x="2137.5" y="26" width="20" height="20" fill="#444"/><path d="M2139.5 28 H2156 A16 16 0 0 1 2139.5 43.5 Z" fill="#57a6e8"/><circle cx="2233.5" cy="23.5" r="7.8" fill="none" stroke="#ececec" stroke-width="1.9"/><path d="M2218.5 42 Q2233.5 24 2248.5 42" fill="none" stroke="#ececec" stroke-width="1.9"/></svg>
<div class="a" style="left:-20px;top:76px;width:112.5px;height:39.5px;background:#242424;border-radius:6px;border:1px solid #1f1f1f;box-shadow:0 1px 0 #3c3c3c"></div>
<div class="a" style="left:-18px;top:80px;width:77.6px;height:33.5px;background:#2f2f2f;border-radius:3px;"></div>
<div class="a" style="left:60.6px;top:77px;width:30.9px;height:37.5px;background:#363636;border-radius:5px;border-top-left-radius:0;border-bottom-left-radius:0;background:linear-gradient(#434343,#343434 40%,#303030)"></div>
<svg class="a" style="left:68px;top:88px;" width="16" height="16" viewBox="68 88 16 16"><path d="M69.5 91.5 H82.5 L76 102 Z" fill="#d4d4d4"/></svg>
<div class="a" style="left:0px;top:82px;width:4px;height:28px;background:#2b2b2b;border-radius:0px;"></div>
<div class="a" style="left:99px;top:75px;width:170px;height:41px;background:#3d3d3d;border-radius:6px;border:2px solid #242424;box-shadow:0 1.5px 0 #474747, inset 0 1.5px 0 #4c4c4c"></div>
<div class="a" style="left:156px;top:76px;width:2px;height:39px;background:#242424;border-radius:0px;"></div>
<div class="a" style="left:210px;top:76px;width:2px;height:39px;background:#242424;border-radius:0px;"></div>
<div class="t" style="left:121.5px;top:81.11px;font-size:30px;color:#d8d8d8;font-weight:bold;font-family:'Liberation Serif';">B</div>
<div class="t" style="left:174px;top:81.11px;font-size:30px;color:#d8d8d8;font-weight:normal;font-family:'Liberation Serif';font-style:italic">I</div>
<div class="t" style="left:226.5px;top:81.11px;font-size:30px;color:#d8d8d8;font-weight:bold;font-family:'Liberation Serif';">U</div>
<div class="a" style="left:228px;top:105.5px;width:20px;height:2.0px;background:#d8d8d8;border-radius:0px;"></div>
<div class="a" style="left:282.5px;top:76.5px;width:67.0px;height:37.5px;background:#000;border-radius:6px;border:2.5px solid #252525;box-shadow:0 1.5px 0 #4a4a4a"></div>
<div class="a" style="left:372px;top:78px;width:2px;height:37.5px;background:#242424;border-radius:0px;"></div>
<div class="t" style="left:394px;top:77.11px;font-size:30px;color:#cfcfcf;font-weight:normal;font-family:'Liberation Sans';">a</div>
<div class="a" style="left:394px;top:105.5px;width:20px;height:2.0px;background:#cfcfcf;border-radius:0px;"></div>
<div class="a" style="left:424px;top:76px;width:235.5px;height:39.5px;background:#242424;border-radius:6px;border:1px solid #1f1f1f;box-shadow:0 1px 0 #3c3c3c"></div>
<div class="a" style="left:426px;top:80px;width:199.5px;height:33.5px;background:#2f2f2f;border-radius:3px;"></div>
<div class="a" style="left:626.5px;top:77px;width:32.0px;height:37.5px;background:#363636;border-radius:5px;border-top-left-radius:0;border-bottom-left-radius:0;background:linear-gradient(#434343,#343434 40%,#303030)"></div>
<svg class="a" style="left:634px;top:88px;" width="16" height="16" viewBox="634 88 16 16"><path d="M635.5 91.5 H648.5 L642 102 Z" fill="#d4d4d4"/></svg>
<div class="t" style="left:431.5px;top:86.88px;font-size:22px;color:#ececec;font-weight:normal;letter-spacing:-0.25px">[No Style]</div>
<div class="a" style="left:665px;top:75px;width:66.5px;height:41px;background:#3d3d3d;border-radius:6px;border:2px solid #242424;box-shadow:0 1.5px 0 #474747, inset 0 1.5px 0 #4c4c4c"></div>
<svg class="a" style="left:680px;top:78px;" width="40" height="38" viewBox="680 78 40 38"><path d="M688 85 A14 14 0 1 1 699 110" fill="none" stroke="#2a2a2a" stroke-width="1.6"/><text x="690" y="103" font-size="26" fill="#9a9a9a" font-family="Liberation Serif">a</text></svg>
<div class="a" style="left:736.5px;top:75px;width:66.5px;height:41px;background:#3d3d3d;border-radius:6px;border:2px solid #242424;box-shadow:0 1.5px 0 #474747, inset 0 1.5px 0 #4c4c4c"></div>
<div class="t" style="left:760px;top:77.72px;font-size:34px;color:#e8e8e8;font-weight:bold;font-family:'Liberation Serif';">a</div>
<div class="t" style="left:816.5px;top:80.80px;font-size:28px;color:#cfcfcf;font-weight:normal;font-family:'Liberation Sans';">¶</div>
<div class="a" style="left:844px;top:76px;width:235px;height:39.5px;background:#242424;border-radius:6px;border:1px solid #1f1f1f;box-shadow:0 1px 0 #3c3c3c"></div>
<div class="a" style="left:846px;top:80px;width:199.5px;height:33.5px;background:#2f2f2f;border-radius:3px;"></div>
<div class="a" style="left:1046.5px;top:77px;width:31.5px;height:37.5px;background:#363636;border-radius:5px;border-top-left-radius:0;border-bottom-left-radius:0;background:linear-gradient(#434343,#343434 40%,#303030)"></div>
<svg class="a" style="left:1054px;top:88px;" width="16" height="16" viewBox="1054 88 16 16"><path d="M1055.5 91.5 H1068.5 L1062 102 Z" fill="#d4d4d4"/></svg>
<div class="t" style="left:851.5px;top:86.88px;font-size:22px;color:#ececec;font-weight:normal;letter-spacing:-0.25px">[No Style]</div>
<div class="a" style="left:1085px;top:75px;width:66px;height:41px;background:#3d3d3d;border-radius:6px;border:2px solid #242424;box-shadow:0 1.5px 0 #474747, inset 0 1.5px 0 #4c4c4c"></div>
<svg class="a" style="left:1100px;top:78px;" width="40" height="38" viewBox="1100 78 40 38"><path d="M1106 85 A14 14 0 1 1 1117 110" fill="none" stroke="#2a2a2a" stroke-width="1.6"/><text x="1110" y="104" font-size="25" fill="#9a9a9a" font-family="Liberation Sans">¶</text></svg>
<div class="a" style="left:1156.5px;top:75px;width:66.5px;height:41px;background:#3d3d3d;border-radius:6px;border:2px solid #242424;box-shadow:0 1.5px 0 #474747, inset 0 1.5px 0 #4c4c4c"></div>
<div class="t" style="left:1181px;top:80.80px;font-size:28px;color:#f0f0f0;font-weight:normal;">¶</div>
<div class="a" style="left:1238px;top:78px;width:2px;height:37.5px;background:#242424;border-radius:0px;"></div>
<div class="a" style="left:1254px;top:75px;width:255.5px;height:41px;background:#3d3d3d;border-radius:6px;border:2px solid #242424;box-shadow:0 1.5px 0 #474747, inset 0 1.5px 0 #4c4c4c"></div>
<div class="a" style="left:1255px;top:76.5px;width:58px;height:38.0px;background:#262626;border-radius:5px;border-top-right-radius:0;border-bottom-right-radius:0"></div>
<div class="a" style="left:1312px;top:76px;width:2px;height:39px;background:#252525;border-radius:0px;"></div>
<div class="a" style="left:1366px;top:76px;width:2px;height:39px;background:#252525;border-radius:0px;"></div>
<div class="a" style="left:1420px;top:76px;width:2px;height:39px;background:#252525;border-radius:0px;"></div>
<div class="a" style="left:1474px;top:76px;width:2px;height:39px;background:#252525;border-radius:0px;"></div>
<svg class="a" style="left:1250px;top:76px;" width="400" height="40" viewBox="1250 76 400 40"><rect x="1274" y="84.00" width="24" height="1.9" fill="#ececec"/><rect x="1274" y="88.05" width="16" height="1.9" fill="#ececec"/><rect x="1274" y="92.10" width="24" height="1.9" fill="#ececec"/><rect x="1274" y="96.15" width="16" height="1.9" fill="#ececec"/><rect x="1274" y="100.20" width="24" height="1.9" fill="#ececec"/><rect x="1274" y="104.25" width="16" height="1.9" fill="#ececec"/><rect x="1328.0" y="84.00" width="24" height="1.9" fill="#ececec"/><rect x="1332.0" y="88.05" width="16" height="1.9" fill="#ececec"/><rect x="1328.0" y="92.10" width="24" height="1.9" fill="#ececec"/><rect x="1332.0" y="96.15" width="16" height="1.9" fill="#ececec"/><rect x="1328.0" y="100.20" width="24" height="1.9" fill="#ececec"/><rect x="1332.0" y="104.25" width="16" height="1.9" fill="#ececec"/><rect x="1382" y="84.00" width="24" height="1.9" fill="#ececec"/><rect x="1390" y="88.05" width="16" height="1.9" fill="#ececec"/><rect x="1382" y="92.10" width="24" height="1.9" fill="#ececec"/><rect x="1390" y="96.15" width="16" height="1.9" fill="#ececec"/><rect x="1382" y="100.20" width="24" height="1.9" fill="#ececec"/><rect x="1390" y="104.25" width="16" height="1.9" fill="#ececec"/><rect x="1434" y="84.00" width="24" height="1.9" fill="#ececec"/><rect x="1434" y="88.05" width="24" height="1.9" fill="#ececec"/><rect x="1434" y="92.10" width="24" height="1.9" fill="#ececec"/><rect x="1434" y="96.15" width="24" height="1.9" fill="#ececec"/><rect x="1434" y="100.20" width="24" height="1.9" fill="#ececec"/><rect x="1434" y="104.25" width="16" height="1.9" fill="#ececec"/><path d="M1485 90 H1497.5 L1491.25 99.5 Z" fill="#d4d4d4"/><circle cx="1537" cy="85" r="2" fill="#ececec"/><rect x="1542" y="84" width="16" height="2" fill="#ececec"/><circle cx="1537" cy="95" r="2" fill="#ececec"/><rect x="1542" y="94" width="16" height="2" fill="#ececec"/><circle cx="1537" cy="105" r="2" fill="#ececec"/><rect x="1542" y="104" width="16" height="2" fill="#ececec"/><rect x="1596" y="84" width="16" height="2" fill="#ececec"/><rect x="1596" y="94" width="16" height="2" fill="#ececec"/><rect x="1596" y="104" width="16" height="2" fill="#ececec"/><text x="1586" y="90" font-size="10.5" fill="#ececec" font-family="Liberation Sans">1</text><text x="1586" y="100" font-size="10.5" fill="#ececec" font-family="Liberation Sans">2</text><text x="1586" y="110" font-size="10.5" fill="#ececec" font-family="Liberation Sans">3</text></svg>
<div class="a" style="left:1515px;top:75px;width:116px;height:41px;background:#3d3d3d;border-radius:6px;border:2px solid #242424;box-shadow:0 1.5px 0 #474747, inset 0 1.5px 0 #4c4c4c"></div>
<div class="a" style="left:1572px;top:76px;width:2px;height:39px;background:#252525;border-radius:0px;"></div>
<svg class="a" style="left:1250px;top:76px;" width="400" height="40" viewBox="1250 76 400 40"><rect x="1274" y="84.00" width="24" height="1.9" fill="#ececec"/><rect x="1274" y="88.05" width="16" height="1.9" fill="#ececec"/><rect x="1274" y="92.10" width="24" height="1.9" fill="#ececec"/><rect x="1274" y="96.15" width="16" height="1.9" fill="#ececec"/><rect x="1274" y="100.20" width="24" height="1.9" fill="#ececec"/><rect x="1274" y="104.25" width="16" height="1.9" fill="#ececec"/><rect x="1328.0" y="84.00" width="24" height="1.9" fill="#ececec"/><rect x="1332.0" y="88.05" width="16" height="1.9" fill="#ececec"/><rect x="1328.0" y="92.10" width="24" height="1.9" fill="#ececec"/><rect x="1332.0" y="96.15" width="16" height="1.9" fill="#ececec"/><rect x="1328.0" y="100.20" width="24" height="1.9" fill="#ececec"/><rect x="1332.0" y="104.25" width="16" height="1.9" fill="#ececec"/><rect x="1382" y="84.00" width="24" height="1.9" fill="#ececec"/><rect x="1390" y="88.05" width="16" height="1.9" fill="#ececec"/><rect x="1382" y="92.10" width="24" height="1.9" fill="#ececec"/><rect x="1390" y="96.15" width="16" height="1.9" fill="#ececec"/><rect x="1382" y="100.20" width="24" height="1.9" fill="#ececec"/><rect x="1390" y="104.25" width="16" height="1.9" fill="#ececec"/><rect x="1434" y="84.00" width="24" height="1.9" fill="#ececec"/><rect x="1434" y="88.05" width="24" height="1.9" fill="#ececec"/><rect x="1434" y="92.10" width="24" height="1.9" fill="#ececec"/><rect x="1434" y="96.15" width="24" height="1.9" fill="#ececec"/><rect x="1434" y="100.20" width="24" height="1.9" fill="#ececec"/><rect x="1434" y="104.25" width="16" height="1.9" fill="#ececec"/><path d="M1485 90 H1497.5 L1491.25 99.5 Z" fill="#d4d4d4"/><circle cx="1537" cy="85" r="2" fill="#ececec"/><rect x="1542" y="84" width="16" height="2" fill="#ececec"/><circle cx="1537" cy="95" r="2" fill="#ececec"/><rect x="1542" y="94" width="16" height="2" fill="#ececec"/><circle cx="1537" cy="105" r="2" fill="#ececec"/><rect x="1542" y="104" width="16" height="2" fill="#ececec"/><rect x="1596" y="84" width="16" height="2" fill="#ececec"/><rect x="1596" y="94" width="16" height="2" fill="#ececec"/><rect x="1596" y="104" width="16" height="2" fill="#ececec"/><text x="1586" y="90" font-size="10.5" fill="#ececec" font-family="Liberation Sans">1</text><text x="1586" y="100" font-size="10.5" fill="#ececec" font-family="Liberation Sans">2</text><text x="1586" y="110" font-size="10.5" fill="#ececec" font-family="Liberation Sans">3</text></svg>
<div class="a" style="left:1636.5px;top:76px;width:144.5px;height:39.5px;background:#242424;border-radius:6px;border:1px solid #1f1f1f;box-shadow:0 1px 0 #3c3c3c"></div>
<div class="a" style="left:1638.5px;top:80px;width:109.0px;height:33.5px;background:#2f2f2f;border-radius:3px;"></div>
<div class="a" style="left:1748.5px;top:77px;width:31.5px;height:37.5px;background:#363636;border-radius:5px;border-top-left-radius:0;border-bottom-left-radius:0;background:linear-gradient(#434343,#343434 40%,#303030)"></div>
<svg class="a" style="left:1756px;top:88px;" width="16" height="16" viewBox="1756 88 16 16"><path d="M1757.5 91.5 H1770.5 L1764 102 Z" fill="#d4d4d4"/></svg>
<div class="t" style="left:1643.5px;top:86.88px;font-size:22px;color:#ececec;font-weight:normal;letter-spacing:-0.1px">[12,4 pt]</div>
<div class="a" style="left:1796px;top:78px;width:2px;height:37.5px;background:#242424;border-radius:0px;"></div>
<div class="a" style="left:1822px;top:78px;width:2px;height:37.5px;background:#242424;border-radius:0px;"></div>
<div class="a" style="left:1838.5px;top:75px;width:66.5px;height:41px;background:#3d3d3d;border-radius:6px;border:2px solid #242424;box-shadow:0 1.5px 0 #474747, inset 0 1.5px 0 #4c4c4c"></div>
<svg class="a" style="left:1850px;top:80px;" width="40" height="34" viewBox="1850 80 40 34"><rect x="1858" y="84" width="24.5" height="26.5" fill="none" stroke="#f0f0f0" stroke-width="2"/><text x="1860.5" y="96" font-size="11" font-weight="bold" fill="#f0f0f0" font-family="Liberation Sans">T</text><rect x="1869" y="88" width="10" height="1.2" fill="#cfcfcf"/><rect x="1869" y="92" width="10" height="1.2" fill="#cfcfcf"/><rect x="1861" y="96" width="18" height="1.2" fill="#cfcfcf"/><rect x="1861" y="100" width="18" height="1.2" fill="#cfcfcf"/><rect x="1861" y="104" width="18" height="1.2" fill="#cfcfcf"/></svg>
<div class="a" style="left:1910.5px;top:75px;width:66.5px;height:41px;background:#3d3d3d;border-radius:6px;border:2px solid #242424;box-shadow:0 1.5px 0 #474747, inset 0 1.5px 0 #4c4c4c"></div>
<div class="t" style="left:1934px;top:81.11px;font-size:30px;color:#ececec;font-weight:normal;font-family:'Liberation Serif';">ﬁ</div>
<div class="t" style="left:35.5px;top:138.30px;font-size:18.9px;color:#d2d2d2;font-weight:normal;letter-spacing:0.2px">2021.12.09 - TEMPLATE DATA MERGE - Plaques d'identité militaires v1 [M]</div>
<div class="t" style="left:1205px;top:138.30px;font-size:18.9px;color:#9a9a9a;font-weight:normal;letter-spacing:0.3px">&lt;Untitled&gt; [M]</div>
<div class="a" style="left:1770px;top:128px;width:516px;height:1524px;background:#2a2a2a;border-radius:0px;"></div>
<div class="a" style="left:1770px;top:128px;width:4px;height:1524px;background:#1f1f1f;border-radius:0px;"></div>
<div class="a" style="left:1774px;top:128px;width:512px;height:41px;background:#2b2b2b;border-radius:0px;"></div>
<div class="a" style="left:1774px;top:169px;width:512px;height:1px;background:#1d1d1d;border-radius:0px;"></div>
<div class="a" style="left:1788px;top:141px;width:2px;height:15px;background:#5a5a5a;border-radius:0px;"></div><div class="a" style="left:1795px;top:141px;width:2px;height:15px;background:#5a5a5a;border-radius:0px;"></div>
<div class="a" style="left:2082px;top:130px;width:70px;height:39px;background:#3a3a3a;border-radius:0px;"></div>
<div class="t" style="left:1818.6px;top:138.35px;font-size:21.2px;color:#8e8e8e;font-weight:normal;">Colour</div>
<div class="a" style="left:1889.5px;top:140px;width:1.7000000000000455px;height:18px;background:#555;border-radius:0px;"></div>
<div class="t" style="left:1898px;top:138.35px;font-size:21.2px;color:#8e8e8e;font-weight:normal;">Swatches</div>
<div class="a" style="left:1999.5px;top:140px;width:1.7000000000000455px;height:18px;background:#555;border-radius:0px;"></div>
<div class="t" style="left:2008.5px;top:138.35px;font-size:21.2px;color:#8e8e8e;font-weight:normal;">Stroke</div>
<div class="t" style="left:2088.3px;top:138.35px;font-size:21.2px;color:#ececec;font-weight:bold;letter-spacing:-0.3px">Fields</div>
<div class="t" style="left:1822.6px;top:177.02px;font-size:21.6px;color:#e8e8e8;font-weight:normal;">Document Information</div>
<div class="t" style="left:1822.6px;top:216.92px;font-size:21.6px;color:#e8e8e8;font-weight:normal;">Document Statistics</div>
<div class="t" style="left:1822.6px;top:256.82px;font-size:21.6px;color:#e8e8e8;font-weight:normal;">Document Sections</div>
<div class="t" style="left:1822.6px;top:296.72px;font-size:21.6px;color:#e8e8e8;font-weight:normal;">Continuation</div>
<div class="t" style="left:1822.6px;top:336.62px;font-size:21.6px;color:#e8e8e8;font-weight:normal;">General Information</div>
<div class="t" style="left:1822.6px;top:377.12px;font-size:21.6px;color:#e8e8e8;font-weight:normal;">Data Merge</div>
<div class="a" style="left:1774px;top:408.4px;width:512px;height:119.80000000000007px;background:#434343;border-radius:0px;"></div>
<div class="a" style="left:1774px;top:408.4px;width:210px;height:119.80000000000007px;background:#3e3e3e;border-radius:0px;"></div>
<div class="a" style="left:1983.5px;top:408.4px;width:2.0px;height:119.80000000000007px;background:#333;border-radius:0px;"></div>
<div class="t" style="right:311px;top:416.72px;font-size:21.6px;color:#e8e8e8;font-weight:normal;">Source:</div>
<div class="t" style="left:2005px;top:416.72px;font-size:21.6px;color:#e8e8e8;font-weight:normal;">&lt;Name&gt;</div>
<div class="t" style="right:311px;top:457.02px;font-size:21.6px;color:#e8e8e8;font-weight:normal;">Merge Index:</div>
<div class="t" style="left:2005px;top:457.02px;font-size:21.6px;color:#e8e8e8;font-weight:normal;">&lt;Index&gt;</div>
<div class="t" style="right:311px;top:496.42px;font-size:21.6px;color:#e8e8e8;font-weight:normal;">Unfiltered Index:</div>
<div class="t" style="left:2005px;top:496.42px;font-size:21.6px;color:#e8e8e8;font-weight:normal;">&lt;Index&gt;</div>
<div class="t" style="left:1822.6px;top:536.62px;font-size:21.6px;color:#e8e8e8;font-weight:normal;">Data Merge - Copy of 2021.12.09 - EXTRACTION P.I.M..xlsx</div>
<div class="a" style="left:1774px;top:567.8px;width:512px;height:24.800000000000068px;background:#323232;border-radius:0px;"></div>
<div class="a" style="left:1774px;top:592.6px;width:512px;height:1.0px;background:#252525;border-radius:0px;"></div>
<div class="a" style="left:1774px;top:593.6px;width:512px;height:43.799999999999955px;background:#2b2b2b;border-radius:0px;"></div>
<div class="a" style="left:1812px;top:597.7px;width:76.20000000000005px;height:39.69999999999993px;background:#3a3a3a;border-radius:0px;"></div>
<div class="a" style="left:1788px;top:608px;width:2px;height:16px;background:#5a5a5a;border-radius:0px;"></div><div class="a" style="left:1795px;top:608px;width:2px;height:16px;background:#5a5a5a;border-radius:0px;"></div>
<div class="t" style="left:1818.6px;top:605.75px;font-size:21.2px;color:#ececec;font-weight:bold;letter-spacing:-0.5px">Layers</div>
<div class="t" style="left:1898.2px;top:605.75px;font-size:21.2px;color:#8e8e8e;font-weight:normal;">Character</div>
<div class="a" style="left:2001.5px;top:607px;width:1.7000000000000455px;height:18px;background:#555;border-radius:0px;"></div>
<div class="t" style="left:2010.4px;top:605.75px;font-size:21.2px;color:#8e8e8e;font-weight:normal;">Paragraph</div>
<div class="a" style="left:2117.5px;top:607px;width:1.699999999999818px;height:18px;background:#555;border-radius:0px;"></div>
<div class="t" style="left:2126px;top:605.75px;font-size:21.2px;color:#8e8e8e;font-weight:normal;">Text Styles</div>
<div class="a" style="left:2270px;top:607.0px;width:16px;height:2.2000000000000455px;background:#e0e0e0;border-radius:0px;"></div>
<div class="a" style="left:2270px;top:611.3px;width:16px;height:2.2000000000000455px;background:#e0e0e0;border-radius:0px;"></div>
<div class="a" style="left:2270px;top:615.6px;width:16px;height:2.2000000000000455px;background:#e0e0e0;border-radius:0px;"></div>
<div class="a" style="left:2270px;top:619.9px;width:16px;height:2.2000000000000455px;background:#e0e0e0;border-radius:0px;"></div>
<div class="a" style="left:1774px;top:637.4px;width:512px;height:58.30000000000007px;background:#3b3b3b;border-radius:0px;"></div>
<div class="t" style="left:1784.8px;top:655.35px;font-size:21.2px;color:#e8e8e8;font-weight:normal;">Opacity:</div>
<div class="a" style="left:1894.6px;top:648.5px;width:96.40000000000009px;height:40.5px;background:#2e2e2e;border-radius:7px;border:1.5px solid #222;box-shadow:0 1px 0 #474747"></div>
<div class="t" style="left:1900.5px;top:659.10px;font-size:21.5px;color:#8a8a8a;font-weight:normal;">100 %</div>
<div class="a" style="left:1997px;top:649px;width:216px;height:38.5px;background:#363636;border-radius:6px;border:1.5px solid #252525;box-shadow:0 1px 0 #474747"></div>
<div class="t" style="left:2006.3px;top:657.50px;font-size:21.5px;color:#8a8a8a;font-weight:normal;">Normal</div>
<div class="a" style="left:1774px;top:695.7px;width:512px;height:661.8px;background:#383838;border-radius:0px;"></div>
<div class="a" style="left:2271.4px;top:695.7px;width:14.599999999999909px;height:661.8px;background:#323232;border-radius:0px;"></div>
<div class="a" style="left:2280px;top:704px;width:8px;height:598px;background:#4a4a4a;border-radius:4px;"></div>
<div class="a" style="left:1774px;top:762.1px;width:497.4000000000001px;height:2.0px;background:#2a2a2a;border-radius:0px;"></div>
<div class="a" style="left:1774px;top:828.2px;width:497.4000000000001px;height:2.0px;background:#2a2a2a;border-radius:0px;"></div>
<div class="a" style="left:1774px;top:894.3px;width:497.4000000000001px;height:2.0px;background:#2a2a2a;border-radius:0px;"></div>
<div class="a" style="left:1774px;top:960.4px;width:497.4000000000001px;height:2.0px;background:#2a2a2a;border-radius:0px;"></div>
<div class="a" style="left:1774px;top:1026.1px;width:497.4000000000001px;height:2.0px;background:#2a2a2a;border-radius:0px;"></div>
<div class="a" style="left:1774px;top:1092.0px;width:497.4000000000001px;height:2.0px;background:#2a2a2a;border-radius:0px;"></div>
<div class="a" style="left:1774px;top:1158.1px;width:497.4000000000001px;height:2.0px;background:#2a2a2a;border-radius:0px;"></div>
<div class="a" style="left:1774px;top:1224.3px;width:497.4000000000001px;height:2.0px;background:#2a2a2a;border-radius:0px;"></div>
<div class="a" style="left:1774px;top:1290.1px;width:497.4000000000001px;height:2.0px;background:#2a2a2a;border-radius:0px;"></div>
<div class="a" style="left:1774px;top:1357px;width:512px;height:3.2999999999999545px;background:#222;border-radius:0px;"></div>
<div class="a" style="left:1816.2px;top:700.4px;width:59.5px;height:59.5px;background:#2a2a2a;border-radius:0px;border:2.2px solid #0c0c0c"></div>
<div class="t" style="left:1887.2px;top:717.87px;font-size:21.3px;color:#a4a4a4;font-weight:normal;letter-spacing:0.15px">(Data Merge Layout)</div>
<div class="a" style="left:2230.7px;top:715.4px;width:28.5px;height:28.5px;background:#3a3a3a;border-radius:6px;border:1.5px solid #1f1f1f;background:linear-gradient(#525252,#3a3a3a 55%,#2f2f2f);box-shadow:0 1px 0 #444"></div><svg class="a" style="left:2230px;top:715px;" width="30" height="30" viewBox="2230 715 30 30"><path d="M2237 730 L2242.5 736.5 L2252 722" fill="none" stroke="#fff" stroke-width="2.6" stroke-linecap="round" stroke-linejoin="round"/></svg>
<div class="a" style="left:1836.5px;top:766.5px;width:59.5px;height:59.5px;background:#2a2a2a;border-radius:0px;border:2.2px solid #0c0c0c"></div>
<div class="t" style="left:1907.5px;top:783.97px;font-size:21.3px;color:#a4a4a4;font-weight:normal;letter-spacing:0.15px">(Group)</div>
<div class="a" style="left:2230.7px;top:781.5px;width:28.5px;height:28.5px;background:#3a3a3a;border-radius:6px;border:1.5px solid #1f1f1f;background:linear-gradient(#525252,#3a3a3a 55%,#2f2f2f);box-shadow:0 1px 0 #444"></div><svg class="a" style="left:2230px;top:781px;" width="30" height="30" viewBox="2230 781 30 30"><path d="M2237 796 L2242.5 802.5 L2252 788" fill="none" stroke="#fff" stroke-width="2.6" stroke-linecap="round" stroke-linejoin="round"/></svg>
<div class="a" style="left:1856.5px;top:832.6px;width:59.5px;height:59.5px;background:#2a2a2a;border-radius:0px;border:2.2px solid #0c0c0c"></div>
<div class="t" style="left:1927.5px;top:850.07px;font-size:21.3px;color:#a4a4a4;font-weight:normal;letter-spacing:0.15px">(Group)</div>
<div class="a" style="left:2230.7px;top:847.6px;width:28.5px;height:28.5px;background:#3a3a3a;border-radius:6px;border:1.5px solid #1f1f1f;background:linear-gradient(#525252,#3a3a3a 55%,#2f2f2f);box-shadow:0 1px 0 #444"></div><svg class="a" style="left:2230px;top:847px;" width="30" height="30" viewBox="2230 847 30 30"><path d="M2237 862 L2242.5 868.5 L2252 854" fill="none" stroke="#fff" stroke-width="2.6" stroke-linecap="round" stroke-linejoin="round"/></svg>
<div class="a" style="left:1876.4px;top:898.7px;width:59.5px;height:59.5px;background:#2a2a2a;border-radius:0px;border:2.2px solid #0c0c0c"></div>
<div class="t" style="left:1891.4px;top:908.03px;font-size:38px;color:#cfcfcf;font-weight:normal;font-family:'Liberation Serif';">A</div>
<div class="t" style="left:1947.4px;top:916.17px;font-size:21.3px;color:#a4a4a4;font-weight:normal;letter-spacing:0.4px">(Art Text)</div>
<div class="a" style="left:2230.7px;top:913.7px;width:28.5px;height:28.5px;background:#3a3a3a;border-radius:6px;border:1.5px solid #1f1f1f;background:linear-gradient(#525252,#3a3a3a 55%,#2f2f2f);box-shadow:0 1px 0 #444"></div><svg class="a" style="left:2230px;top:913px;" width="30" height="30" viewBox="2230 913 30 30"><path d="M2237 928 L2242.5 934.5 L2252 920" fill="none" stroke="#fff" stroke-width="2.6" stroke-linecap="round" stroke-linejoin="round"/></svg>
<div class="a" style="left:1876.4px;top:964.8px;width:59.5px;height:59.5px;background:#2a2a2a;border-radius:0px;border:2.2px solid #0c0c0c"></div>
<div class="t" style="left:1891.4px;top:974.13px;font-size:38px;color:#cfcfcf;font-weight:normal;font-family:'Liberation Serif';">A</div>
<div class="t" style="left:1947.4px;top:982.27px;font-size:21.3px;color:#a4a4a4;font-weight:normal;letter-spacing:0.4px">(Art Text)</div>
<div class="a" style="left:2230.7px;top:979.8px;width:28.5px;height:28.5px;background:#3a3a3a;border-radius:6px;border:1.5px solid #1f1f1f;background:linear-gradient(#525252,#3a3a3a 55%,#2f2f2f);box-shadow:0 1px 0 #444"></div><svg class="a" style="left:2230px;top:979px;" width="30" height="30" viewBox="2230 979 30 30"><path d="M2237 994 L2242.5 1000.5 L2252 986" fill="none" stroke="#fff" stroke-width="2.6" stroke-linecap="round" stroke-linejoin="round"/></svg>
<div class="a" style="left:1876.4px;top:1030.9px;width:59.5px;height:59.5px;background:#2a2a2a;border-radius:0px;border:2.2px solid #0c0c0c"></div>
<div class="t" style="left:1891.4px;top:1040.23px;font-size:38px;color:#cfcfcf;font-weight:normal;font-family:'Liberation Serif';">A</div>
<div class="t" style="left:1947.4px;top:1048.37px;font-size:21.3px;color:#f4f4f4;font-weight:bold;">N° matricule <span style="font-weight:normal;color:#a4a4a4">(Art Text)</span></div>
<div class="a" style="left:2230.7px;top:1045.9px;width:28.5px;height:28.5px;background:#3a3a3a;border-radius:6px;border:1.5px solid #1f1f1f;background:linear-gradient(#525252,#3a3a3a 55%,#2f2f2f);box-shadow:0 1px 0 #444"></div><svg class="a" style="left:2230px;top:1045px;" width="30" height="30" viewBox="2230 1045 30 30"><path d="M2237 1060 L2242.5 1066.5 L2252 1052" fill="none" stroke="#fff" stroke-width="2.6" stroke-linecap="round" stroke-linejoin="round"/></svg>
<div class="a" style="left:1876.4px;top:1097.0px;width:59.5px;height:59.5px;background:#2a2a2a;border-radius:0px;border:2.2px solid #0c0c0c"></div>
<div class="t" style="left:1891.4px;top:1106.33px;font-size:38px;color:#cfcfcf;font-weight:normal;font-family:'Liberation Serif';">A</div>
<div class="t" style="left:1947.4px;top:1114.47px;font-size:21.3px;color:#f4f4f4;font-weight:bold;">N° matricule <span style="font-weight:normal;color:#a4a4a4">(Art Text)</span></div>
<div class="a" style="left:2230.7px;top:1112.0px;width:28.5px;height:28.5px;background:#3a3a3a;border-radius:6px;border:1.5px solid #1f1f1f;background:linear-gradient(#525252,#3a3a3a 55%,#2f2f2f);box-shadow:0 1px 0 #444"></div><svg class="a" style="left:2230px;top:1112px;" width="30" height="30" viewBox="2230 1112 30 30"><path d="M2237 1127 L2242.5 1133.5 L2252 1119" fill="none" stroke="#fff" stroke-width="2.6" stroke-linecap="round" stroke-linejoin="round"/></svg>
<div class="a" style="left:1876.4px;top:1163.1px;width:59.5px;height:59.5px;background:#2a2a2a;border-radius:0px;border:2.2px solid #0c0c0c"></div>
<div class="t" style="left:1891.4px;top:1172.43px;font-size:38px;color:#cfcfcf;font-weight:normal;font-family:'Liberation Serif';">A</div>
<div class="t" style="left:1947.4px;top:1180.57px;font-size:21.3px;color:#a4a4a4;font-weight:normal;letter-spacing:0.4px">(Art Text)</div>
<div class="a" style="left:2230.7px;top:1178.1px;width:28.5px;height:28.5px;background:#3a3a3a;border-radius:6px;border:1.5px solid #1f1f1f;background:linear-gradient(#525252,#3a3a3a 55%,#2f2f2f);box-shadow:0 1px 0 #444"></div><svg class="a" style="left:2230px;top:1178px;" width="30" height="30" viewBox="2230 1178 30 30"><path d="M2237 1193 L2242.5 1199.5 L2252 1185" fill="none" stroke="#fff" stroke-width="2.6" stroke-linecap="round" stroke-linejoin="round"/></svg>
<div class="a" style="left:1876.4px;top:1229.2px;width:59.5px;height:59.5px;background:#2a2a2a;border-radius:0px;border:2.2px solid #0c0c0c"></div>
<div class="t" style="left:1891.4px;top:1238.53px;font-size:38px;color:#cfcfcf;font-weight:normal;font-family:'Liberation Serif';">A</div>
<div class="t" style="left:1947.4px;top:1246.67px;font-size:21.3px;color:#a4a4a4;font-weight:normal;letter-spacing:0.4px">(Art Text)</div>
<div class="a" style="left:2230.7px;top:1244.2px;width:28.5px;height:28.5px;background:#3a3a3a;border-radius:6px;border:1.5px solid #1f1f1f;background:linear-gradient(#525252,#3a3a3a 55%,#2f2f2f);box-shadow:0 1px 0 #444"></div><svg class="a" style="left:2230px;top:1244px;" width="30" height="30" viewBox="2230 1244 30 30"><path d="M2237 1259 L2242.5 1265.5 L2252 1251" fill="none" stroke="#fff" stroke-width="2.6" stroke-linecap="round" stroke-linejoin="round"/></svg>
<div class="a" style="left:1856.4px;top:1295.3px;width:59.5px;height:59.5px;background:#2a2a2a;border-radius:0px;border:2.2px solid #0c0c0c"></div>
<div class="t" style="left:1927.4px;top:1312.77px;font-size:21.3px;color:#f4f4f4;font-weight:bold;width:289.3px;overflow:hidden;letter-spacing:0.45px">Plaque identité militaire (Cu</div>
<div class="a" style="left:2230.7px;top:1310.3px;width:28.5px;height:28.5px;background:#3a3a3a;border-radius:6px;border:1.5px solid #1f1f1f;background:linear-gradient(#525252,#3a3a3a 55%,#2f2f2f);box-shadow:0 1px 0 #444"></div><svg class="a" style="left:2230px;top:1310px;" width="30" height="30" viewBox="2230 1310 30 30"><path d="M2237 1325 L2242.5 1331.5 L2252 1317" fill="none" stroke="#fff" stroke-width="2.6" stroke-linecap="round" stroke-linejoin="round"/></svg>
<div class="a" style="left:1774px;top:1360.3px;width:512px;height:43.700000000000045px;background:#393939;border-radius:0px;"></div>
<div class="a" style="left:1783px;top:1362px;width:42px;height:39.59999999999991px;background:#2d2d2d;border-radius:0px;"></div>
<div class="t" style="left:2028px;top:1366.11px;font-size:30px;color:#a8a8a8;font-weight:normal;font-family:'Liberation Serif';font-style:italic">fx</div>
<div class="a" style="left:1774px;top:1404px;width:512px;height:4.7000000000000455px;background:#2c2c2c;border-radius:0px;"></div>
<div class="a" style="left:1774px;top:1408.7px;width:512px;height:42.5px;background:#2b2b2b;border-radius:0px;"></div>
<div class="a" style="left:1812px;top:1412.3px;width:110.29999999999995px;height:38.90000000000009px;background:#3a3a3a;border-radius:0px;"></div>
<div class="a" style="left:1788px;top:1422px;width:2px;height:16px;background:#5a5a5a;border-radius:0px;"></div><div class="a" style="left:1795px;top:1422px;width:2px;height:16px;background:#5a5a5a;border-radius:0px;"></div>
<div class="t" style="left:1819px;top:1419.05px;font-size:21.2px;color:#ececec;font-weight:bold;letter-spacing:-0.85px">Transform</div>
<div class="t" style="left:1932.4px;top:1419.05px;font-size:21.2px;color:#8e8e8e;font-weight:normal;">Navigator</div>
<div class="a" style="left:2033.3px;top:1420px;width:1.7000000000000455px;height:19px;background:#555;border-radius:0px;"></div>
<div class="t" style="left:2042.2px;top:1419.05px;font-size:21.2px;color:#8e8e8e;font-weight:normal;">History</div>
<div class="a" style="left:1774px;top:1451.2px;width:512px;height:200.79999999999995px;background:#3f3f3f;border-radius:0px;"></div>
<div class="t" style="left:1922.5px;top:1483.57px;font-size:21.3px;color:#e8e8e8;font-weight:bold;">X:</div>
<div class="a" style="left:1948.5px;top:1472.6px;width:118.5px;height:36.80000000000018px;background:#2d2d2d;border-radius:7px;border:1.5px solid #222;box-shadow:0 1px 0 #474747"></div>
<div class="t" style="left:1955.5px;top:1483.40px;font-size:21.5px;color:#8a8a8a;font-weight:normal;">0 mm</div>
<div class="t" style="left:2086px;top:1483.57px;font-size:21.3px;color:#e8e8e8;font-weight:bold;">W:</div>
<div class="a" style="left:2116px;top:1472.6px;width:119px;height:36.80000000000018px;background:#2d2d2d;border-radius:7px;border:1.5px solid #222;box-shadow:0 1px 0 #474747"></div>
<div class="t" style="left:2123px;top:1483.40px;font-size:21.5px;color:#8a8a8a;font-weight:normal;">0 mm</div>
<div class="t" style="left:1924px;top:1527.47px;font-size:21.3px;color:#e8e8e8;font-weight:bold;">Y:</div>
<div class="a" style="left:1948.5px;top:1516.5px;width:118.5px;height:37.09999999999991px;background:#2d2d2d;border-radius:7px;border:1.5px solid #222;box-shadow:0 1px 0 #474747"></div>
<div class="t" style="left:1955.5px;top:1527.30px;font-size:21.5px;color:#8a8a8a;font-weight:normal;">0 mm</div>
<div class="t" style="left:2089.5px;top:1527.47px;font-size:21.3px;color:#e8e8e8;font-weight:bold;">H:</div>
<div class="a" style="left:2116px;top:1516.5px;width:119px;height:37.09999999999991px;background:#2d2d2d;border-radius:7px;border:1.5px solid #222;box-shadow:0 1px 0 #474747"></div>
<div class="t" style="left:2123px;top:1527.30px;font-size:21.5px;color:#8a8a8a;font-weight:normal;">0 mm</div>
<div class="t" style="left:1922.5px;top:1591.77px;font-size:21.3px;color:#e8e8e8;font-weight:bold;">R:</div>
<div class="a" style="left:1948.5px;top:1580.8px;width:118.5px;height:36.600000000000136px;background:#2d2d2d;border-radius:7px;border:1.5px solid #222;box-shadow:0 1px 0 #474747"></div>
<div class="t" style="left:1955.5px;top:1591.60px;font-size:21.5px;color:#8a8a8a;font-weight:normal;">0 °</div>
<div class="t" style="left:2090px;top:1591.77px;font-size:21.3px;color:#e8e8e8;font-weight:bold;">S:</div>
<div class="a" style="left:2116px;top:1580.8px;width:119px;height:36.600000000000136px;background:#2d2d2d;border-radius:7px;border:1.5px solid #222;box-shadow:0 1px 0 #474747"></div>
<div class="t" style="left:2123px;top:1591.60px;font-size:21.5px;color:#8a8a8a;font-weight:normal;">0 °</div>
<svg class="a" style="left:1770px;top:128px;" width="516" height="1524" viewBox="1770 128 516 1524"><path d="M1791 179.8 L1805.8 188.3 L1791 196.8 Z" fill="#9e9e9e"/><path d="M1791 219.70000000000002 L1805.8 228.20000000000002 L1791 236.70000000000002 Z" fill="#9e9e9e"/><path d="M1791 259.6 L1805.8 268.1 L1791 276.6 Z" fill="#9e9e9e"/><path d="M1791 299.5 L1805.8 308.0 L1791 316.5 Z" fill="#9e9e9e"/><path d="M1791 339.4 L1805.8 347.9 L1791 356.4 Z" fill="#9e9e9e"/><path d="M1789 381.3 H1806.8 L1797.9 395.4 Z" fill="#9e9e9e"/><path d="M1791 539.5 L1805.8 548.0 L1791 556.5 Z" fill="#9e9e9e"/><path d="M1973.7 666 H1984.3 L1979.0 673.5 Z" fill="#8a8a8a"/><path d="M2192.7 664 L2196.85 658.5 L2201 664 Z M2192.7 672.6 H2201 L2196.85 678 Z" fill="#8a8a8a"/><g transform="translate(2233.9,668.2)" fill="#a6a6a6"><rect x="-2.8" y="-12.2" width="5.6" height="6" transform="rotate(0)"/><rect x="-2.8" y="-12.2" width="5.6" height="6" transform="rotate(45)"/><rect x="-2.8" y="-12.2" width="5.6" height="6" transform="rotate(90)"/><rect x="-2.8" y="-12.2" width="5.6" height="6" transform="rotate(135)"/><rect x="-2.8" y="-12.2" width="5.6" height="6" transform="rotate(180)"/><rect x="-2.8" y="-12.2" width="5.6" height="6" transform="rotate(225)"/><rect x="-2.8" y="-12.2" width="5.6" height="6" transform="rotate(270)"/><rect x="-2.8" y="-12.2" width="5.6" height="6" transform="rotate(315)"/><circle r="8.6"/><circle r="3.6" fill="#3b3b3b"/></g><path d="M2267.5 667 V661 A5.5 5.5 0 0 1 2278.5 661 V667" fill="none" stroke="#a6a6a6" stroke-width="2.4"/><rect x="2264.7" y="665.5" width="16.5" height="15" rx="2" fill="#a6a6a6"/><circle cx="1796" cy="730.9" r="13.7" fill="#2a2a2a"/><path d="M1788 725.4 H1804 L1796.0 738.4 Z" fill="#a0a0a0"/><circle cx="1816" cy="797.0" r="13.7" fill="#2a2a2a"/><path d="M1808 791.5 H1824 L1816.0 804.5 Z" fill="#a0a0a0"/><rect x="1843.5" y="770.0" width="46" height="52" rx="5" fill="none" stroke="#2c422c" stroke-width="0.7"/><circle cx="1849.0" cy="796.0" r="1" fill="#2b4a2b"/><circle cx="1853.3" cy="796.0" r="1" fill="#2b4a2b"/><circle cx="1857.6" cy="796.0" r="1" fill="#2b4a2b"/><circle cx="1861.9" cy="796.0" r="1" fill="#2b4a2b"/><circle cx="1866.2" cy="796.0" r="1" fill="#2b4a2b"/><circle cx="1870.5" cy="796.0" r="1" fill="#2b4a2b"/><circle cx="1874.8" cy="796.0" r="1" fill="#2b4a2b"/><circle cx="1879.1" cy="796.0" r="1" fill="#2b4a2b"/><circle cx="1883.4" cy="796.0" r="1" fill="#2b4a2b"/><circle cx="1866.5" cy="773.0" r="1.6" fill="none" stroke="#2b4a2b" stroke-width="0.6"/><circle cx="1866.5" cy="819.0" r="1.6" fill="none" stroke="#2b4a2b" stroke-width="0.6"/><rect x="1871" y="772.4" width="11" height="1.3" fill="#1b1b1b"/><rect x="1849" y="781.9" width="34" height="1.3" fill="#1b1b1b"/><rect x="1849" y="788.4" width="34" height="1.3" fill="#1b1b1b"/><rect x="1849" y="802.4" width="34" height="1.3" fill="#1b1b1b"/><rect x="1849" y="809.4" width="34" height="1.3" fill="#1b1b1b"/><rect x="1871" y="818.4" width="11" height="1.3" fill="#1b1b1b"/><circle cx="1836" cy="863.1" r="13.7" fill="#2a2a2a"/><path d="M1828 857.6 H1844 L1836.0 870.6 Z" fill="#a0a0a0"/><rect x="1891" y="836.7" width="12" height="1.3" fill="#1b1b1b"/><rect x="1867" y="846.5" width="37" height="1.3" fill="#1b1b1b"/><rect x="1867" y="853.4" width="37" height="1.3" fill="#1b1b1b"/><rect x="1867" y="869.4" width="37" height="1.3" fill="#1b1b1b"/><rect x="1867" y="876.2" width="37" height="1.3" fill="#1b1b1b"/><rect x="1891" y="886.5" width="12" height="1.3" fill="#1b1b1b"/><rect x="1863.4" y="1298.3" width="45" height="52" fill="none" stroke="#2c3a2c" stroke-width="0.8"/><circle cx="1867.4" cy="1325.3" r="0.9" fill="#2c4a2c"/><circle cx="1872.4" cy="1325.3" r="0.9" fill="#2c4a2c"/><circle cx="1877.4" cy="1325.3" r="0.9" fill="#2c4a2c"/><circle cx="1882.4" cy="1325.3" r="0.9" fill="#2c4a2c"/><circle cx="1887.4" cy="1325.3" r="0.9" fill="#2c4a2c"/><circle cx="1892.4" cy="1325.3" r="0.9" fill="#2c4a2c"/><circle cx="1897.4" cy="1325.3" r="0.9" fill="#2c4a2c"/><circle cx="1902.4" cy="1325.3" r="0.9" fill="#2c4a2c"/><circle cx="1907.4" cy="1325.3" r="0.9" fill="#2c4a2c"/><path d="M1789 1370 L1804 1377.5 L1819.5 1370 V1374 L1804 1381.5 L1789 1374 Z" fill="#a8a8a8"/><path d="M1789 1378 L1804 1385.5 L1819.5 1378 V1382 L1804 1389.5 L1789 1382 Z" fill="#a8a8a8"/><path d="M1789 1386 L1804 1393.5 L1819.5 1386 V1390 L1804 1397.5 L1789 1390 Z" fill="#a8a8a8"/><path d="M1940 1369.7 H1968 V1393.8 H1940 Z M1954 1373.7 A8 8 0 1 0 1954 1389.7 A8 8 0 1 0 1954 1373.7 Z" fill="#a8a8a8" fill-rule="evenodd"/><circle cx="2000" cy="1382" r="11" fill="none" stroke="#a8a8a8" stroke-width="2"/><path d="M2005 1371.5 A11 11 0 0 1 1996 1392.5 Z" fill="#a8a8a8" transform="rotate(180 2000 1382)"/><g transform="translate(1838.7,-224.5) scale(1)"><path d="M382.3 1595.5 H392.5 L401.1 1604 V1617.4 H382.3 Z" fill="none" stroke="#a8a8a8" stroke-width="2.2"/><path d="M391.5 1595.5 V1604.6 H401.1" fill="none" stroke="#a8a8a8" stroke-width="2.2"/></g><g transform="translate(2265,1371) scale(1.05) translate(-424,-1592)"><path d="M424 1597.9 Q424 1594 428 1594 H438 Q442 1594 442 1597.9 Z" fill="#a8a8a8"/><rect x="430" y="1592" width="6.2" height="3" rx="1" fill="#a8a8a8"/><path d="M425 1599.9 H441.2 L440.1 1618.2 H426 Z" fill="#a8a8a8"/><path d="M428 1602 H430.2 V1616 H428 Z M432.3 1602 H434.3 V1616 H432.3 Z M436.3 1602 H438.5 V1616 H436.3 Z" fill="#393939"/></g><rect x="1814" y="1497" width="66" height="67" fill="#5e5e5e"/><rect x="1809" y="1493" width="11" height="11" fill="#4e4e4e"/><rect x="1809" y="1525.5" width="11" height="11" fill="#4e4e4e"/><rect x="1809" y="1558" width="11" height="11" fill="#4e4e4e"/><rect x="1841.5" y="1493" width="11" height="11" fill="#4e4e4e"/><rect x="1841.5" y="1525.5" width="11" height="11" fill="#4e4e4e"/><rect x="1841.5" y="1558" width="11" height="11" fill="#4e4e4e"/><rect x="1874" y="1493" width="11" height="11" fill="#4e4e4e"/><rect x="1874" y="1525.5" width="11" height="11" fill="#4e4e4e"/><rect x="1874" y="1558" width="11" height="11" fill="#4e4e4e"/><path d="M2043 1595.8 H2053.5 L2048.25 1604.8 Z" fill="#8a8a8a"/><path d="M2211 1595.8 H2221.5 L2216.25 1604.8 Z" fill="#8a8a8a"/><rect x="2257.5" y="1500" width="8" height="13" rx="4" fill="none" stroke="#8a8a8a" stroke-width="1.8"/><rect x="2257.5" y="1514.5" width="8" height="13" rx="4" fill="none" stroke="#8a8a8a" stroke-width="1.8"/><rect x="2260.6" y="1509" width="1.8" height="10" fill="#8a8a8a"/></svg>
<div class="a" style="left:0px;top:1652px;width:2286px;height:40px;background:#323232;border-radius:0px;"></div>
<div class="a" style="left:0px;top:1692px;width:2286px;height:1.5px;background:#5a5a5a;border-radius:0px;"></div>
<div class="a" style="left:0px;top:1693.5px;width:2286px;height:1.0px;background:#111;border-radius:0px;"></div>
<div class="a" style="left:0px;top:1694.5px;width:2286px;height:1.5px;background:#3f6a40;border-radius:0px;"></div>
<div class="t" style="left:-2px;top:1662.05px;font-size:21.2px;color:#a8a8a8;font-weight:normal;letter-spacing:0.45px"><b style="color:#f2f2f2">ck</b> to create Art text. <b style="color:#f2f2f2">Click</b>+⌘ an object to select it.</div>
<div class="a" style="left:361.5px;top:753.3px;width:1320.5px;height:881.7px;background:#323232;border-radius:11px;box-shadow:0 28px 45px 0 rgba(0,0,0,0.45), 0 18px 60px 2px rgba(0,0,0,0.4), 0 0 0 1px #101010, inset 0 0 0 1px #4c4c4c;overflow:hidden"></div>
<div class="a" style="left:362.5px;top:754.3px;width:1318.5px;height:2.0px;background:#474747;border-radius:10px;border-bottom-left-radius:0;border-bottom-right-radius:0;opacity:0.6"></div>
<svg class="a" style="left:370px;top:760px;" width="120" height="32" viewBox="370 760 120 32"><circle cx="390" cy="776" r="12" fill="#fe5f57"/><circle cx="429.8" cy="776" r="12" fill="#e6c03c"/><circle cx="469.8" cy="776" r="12" fill="#52c22b"/></svg>
<div class="t" style="left:521.5px;width:1000px;text-align:center;top:765.36px;font-size:23.2px;color:#e6e6e6;font-weight:normal;">Data Merge</div>
<div class="a" style="left:362.0px;top:800px;width:546.0px;height:776px;background:#444444;border-radius:0px;"></div>
<div class="a" style="left:362.0px;top:800px;width:546.0px;height:82px;background:#5b7ba3;border-radius:0px;"></div>
<div class="t" style="left:370.3px;top:811.48px;font-size:26.6px;color:#ececec;font-weight:normal;width:537.5px;overflow:hidden;letter-spacing:0px">Copy of 2021.12.09 - EXTRACTION P.I.M..xls</div>
<div class="t" style="left:394px;top:848.76px;font-size:23.2px;color:#ececec;font-weight:normal;letter-spacing:0.2px">Whole Document</div>
<div class="a" style="left:362.0px;top:1576px;width:546.0px;height:58px;background:#2e2e2e;border-radius:0px;border-bottom-left-radius:10px"></div>
<div class="a" style="left:908px;top:800px;width:1.5px;height:834px;background:#2a2a2a;border-radius:0px;"></div>
<div class="a" style="left:362.0px;top:1576px;width:546.0px;height:2.5px;background:#262626;border-radius:0px;"></div>
<svg class="a" style="left:375px;top:1588px;" width="80" height="36" viewBox="375 1588 80 36"><path d="M382.3 1595.5 H392.5 L401.1 1604 V1617.4 H382.3 Z" fill="none" stroke="#a8a8a8" stroke-width="2.2" stroke-linejoin="miter"/><path d="M391.5 1595.5 V1604.6 H401.1" fill="none" stroke="#a8a8a8" stroke-width="2.2"/><path d="M424 1597.9 Q424 1594 428 1594 H438 Q442 1594 442 1597.9 Z" fill="#a8a8a8"/><rect x="430" y="1592" width="6.2" height="3" rx="1" fill="#a8a8a8"/><path d="M425 1599.9 H441.2 L440.1 1618.2 H426 Z" fill="#a8a8a8"/><path d="M428 1602 H430.2 V1616 H428 Z M432.3 1602 H434.3 V1616 H432.3 Z M436.3 1602 H438.5 V1616 H436.3 Z" fill="#2e2e2e"/></svg>
<div class="a" style="left:916px;top:797.5px;width:758px;height:42.5px;background:#2a2a2a;border-radius:0px;"></div>
<svg class="a" style="left:930px;top:797px;" width="30" height="43" viewBox="930 797 30 43"><path d="M934 812.5 H953.5 L943.75 827.5 Z" fill="#9a9a9a"/></svg>
<div class="t" style="left:964.5px;top:808.72px;font-size:21.6px;color:#ececec;font-weight:normal;">Source</div>
<div class="t" style="right:1152.5px;top:861.72px;font-size:21.6px;color:#e6e6e6;font-weight:normal;">File:</div>
<div class="t" style="left:1142px;top:862.05px;font-size:21.2px;color:#e6e6e6;font-weight:normal;letter-spacing:-0.05px">Copy of 2021.12.09 - EXTRACTION P.I.M..xlsx</div>
<div class="a" style="left:1152.5px;top:907px;width:148.5px;height:40.5px;background:#3c3c3c;border-radius:6px;border:1.5px solid #1d1d1d;background:linear-gradient(#434343,#3a3a3a);box-shadow:0 1px 0 #3d3d3d"></div>
<div class="t" style="left:726.75px;width:1000px;text-align:center;top:917.05px;font-size:21.5px;color:#ececec;font-weight:normal;">Update</div>
<div class="a" style="left:1331px;top:907px;width:148.5px;height:40.5px;background:#3c3c3c;border-radius:6px;border:1.5px solid #1d1d1d;background:linear-gradient(#434343,#3a3a3a);box-shadow:0 1px 0 #3d3d3d"></div>
<div class="t" style="left:905.25px;width:1000px;text-align:center;top:917.05px;font-size:21.5px;color:#ececec;font-weight:normal;">Show</div>
<div class="a" style="left:1506px;top:907px;width:149px;height:40.5px;background:#3c3c3c;border-radius:6px;border:1.5px solid #1d1d1d;background:linear-gradient(#434343,#3a3a3a);box-shadow:0 1px 0 #3d3d3d"></div>
<div class="t" style="left:1080.5px;width:1000px;text-align:center;top:917.05px;font-size:21.5px;color:#ececec;font-weight:normal;">Select</div>
<div class="t" style="right:1152.5px;top:969.72px;font-size:21.6px;color:#e6e6e6;font-weight:normal;">Sheet:</div>
<div class="a" style="left:1147px;top:961px;width:206px;height:37.5px;background:#2e2e2e;border-radius:6px;border:1.5px solid #222;box-shadow:0 1px 0 #3e3e3e"></div>
<div class="t" style="left:1156px;top:969.55px;font-size:21.2px;color:#e6e6e6;font-weight:normal;letter-spacing:-0.2px">2021.12.09 - EX...</div>
<svg class="a" style="left:1330px;top:965px;" width="14" height="32" viewBox="1330 965 14 32"><path d="M1333 974.5 L1337 969 L1341 974.5 Z M1333 983 H1341 L1337 988.5 Z" fill="#cfcfcf"/></svg>
<div class="t" style="left:1142.5px;top:1023.42px;font-size:21.6px;color:#e6e6e6;font-weight:normal;letter-spacing:0.2px">5 fields, 2 records loaded</div>
<div class="a" style="left:916px;top:1067.6px;width:758px;height:41.90000000000009px;background:#2a2a2a;border-radius:0px;"></div>
<svg class="a" style="left:930px;top:1067px;" width="30" height="42" viewBox="930 1067 30 42"><path d="M934 1082.6 H953.5 L943.75 1097.6 Z" fill="#9a9a9a"/></svg>
<div class="t" style="left:964.5px;top:1078.82px;font-size:21.6px;color:#ececec;font-weight:normal;">Filter</div>
<div class="t" style="right:1152.5px;top:1131.72px;font-size:21.6px;color:#e6e6e6;font-weight:normal;">Use:</div>
<div class="a" style="left:1143.5px;top:1122.4px;width:519.5px;height:40.399999999999864px;background:#3b3b3b;border-radius:6px;border:1.5px solid #202020;box-shadow:0 1px 0 #3c3c3c"></div>
<div class="a" style="left:1145.0px;top:1123.9px;width:258.29999999999995px;height:37.399999999999864px;background:#252525;border-radius:5px;border-top-right-radius:0;border-bottom-right-radius:0"></div>
<div class="a" style="left:1403.3px;top:1123.4px;width:1.5px;height:39.399999999999864px;background:#1f1f1f;border-radius:0px;"></div>
<div class="t" style="left:773.4000000000001px;width:1000px;text-align:center;top:1132.40px;font-size:21.5px;color:#ececec;font-weight:normal;">All Records</div>
<div class="t" style="left:1033.15px;width:1000px;text-align:center;top:1132.40px;font-size:21.5px;color:#ececec;font-weight:normal;">Range</div>
<div class="a" style="left:1143px;top:1177.4px;width:522px;height:39.299999999999955px;background:#383838;border-radius:0px;border:1px solid #333"></div>
<div class="t" style="left:1150.6px;top:1189.22px;font-size:21.6px;color:#666666;font-weight:normal;">1-2</div>
<div class="a" style="left:916px;top:1230px;width:758px;height:42.200000000000045px;background:#2a2a2a;border-radius:0px;"></div>
<svg class="a" style="left:930px;top:1230px;" width="30" height="43" viewBox="930 1230 30 43"><path d="M934 1245 H953.5 L943.75 1260 Z" fill="#9a9a9a"/></svg>
<div class="t" style="left:964.5px;top:1241.22px;font-size:21.6px;color:#ececec;font-weight:normal;">Preview</div>
<div class="a" style="left:1146.9px;top:1290.9px;width:28.5px;height:29.5px;background:#3a3a3a;border-radius:6px;border:1.5px solid #1f1f1f;background:linear-gradient(#525252,#3a3a3a 55%,#2f2f2f);box-shadow:0 1px 0 #3c3c3c"></div><svg class="a" style="left:1146px;top:1290px;" width="30" height="30" viewBox="1146 1290 30 30"><path d="M1153.5 1306 L1159 1313 L1168 1297.5" fill="none" stroke="#fff" stroke-width="2.6" stroke-linecap="round" stroke-linejoin="round"/></svg>
<div class="t" style="left:1182.8px;top:1293.52px;font-size:21.6px;color:#e6e6e6;font-weight:normal;letter-spacing:0.2px">Preview with record</div>
<svg class="a" style="left:1140px;top:1345px;" width="300" height="28" viewBox="1140 1345 300 28"><rect x="1145.7" y="1349.2" width="2.4" height="20" fill="#e6e6e6"/><path d="M1150.6 1359.2 L1166 1349.2 V1369.3 Z" fill="#e6e6e6"/><path d="M1176 1359.2 L1192.3 1349.2 V1369.3 Z" fill="#e6e6e6"/><path d="M1389.7 1349.2 L1405.5 1359.2 L1389.7 1369.3 Z" fill="#e6e6e6"/><path d="M1415.6 1349.2 L1432.2 1359.2 L1415.6 1369.3 Z" fill="#e6e6e6"/><rect x="1433.8" y="1349.2" width="2.4" height="20" fill="#e6e6e6"/></svg>
<div class="a" style="left:1204.4px;top:1338.3px;width:175.29999999999995px;height:40.200000000000045px;background:#2c2c2c;border-radius:6px;border:1.5px solid #1f1f1f;box-shadow:0 1px 0 #3e3e3e"></div>
<div class="t" style="left:1210.4px;top:1348.72px;font-size:21.6px;color:#e6e6e6;font-weight:normal;">2</div>
<div class="a" style="left:916px;top:1392px;width:758px;height:41.40000000000009px;background:#2a2a2a;border-radius:0px;"></div>
<svg class="a" style="left:930px;top:1392px;" width="30" height="42" viewBox="930 1392 30 42"><path d="M934 1407 H953.5 L943.75 1422 Z" fill="#9a9a9a"/></svg>
<div class="t" style="left:964.5px;top:1403.22px;font-size:21.6px;color:#ececec;font-weight:normal;">Merge Pages</div>
<div class="a" style="left:1146.8px;top:1453.2px;width:28.5px;height:29.5px;background:#3a3a3a;border-radius:6px;border:1.5px solid #1f1f1f;background:linear-gradient(#525252,#3a3a3a 55%,#2f2f2f);box-shadow:0 1px 0 #3c3c3c"></div><svg class="a" style="left:1146px;top:1453px;" width="30" height="30" viewBox="1146 1453 30 30"><path d="M1153.5 1469 L1159 1476 L1168 1460.5" fill="none" stroke="#fff" stroke-width="2.6" stroke-linecap="round" stroke-linejoin="round"/></svg>
<div class="t" style="left:1182.3px;top:1455.42px;font-size:21.6px;color:#e6e6e6;font-weight:normal;letter-spacing:0.2px">Merge Enabled</div>
<div class="t" style="right:1153px;top:1509.52px;font-size:21.6px;color:#e6e6e6;font-weight:normal;">Repeat:</div>
<div class="a" style="left:1144px;top:1500.4px;width:519.3px;height:40.59999999999991px;background:#3b3b3b;border-radius:6px;border:1.5px solid #202020;box-shadow:0 1px 0 #3c3c3c"></div>
<div class="a" style="left:1145.5px;top:1501.9px;width:257.79999999999995px;height:37.59999999999991px;background:#252525;border-radius:5px;border-top-right-radius:0;border-bottom-right-radius:0"></div>
<div class="a" style="left:1403.3px;top:1501.4px;width:1.5px;height:39.59999999999991px;background:#1f1f1f;border-radius:0px;"></div>
<div class="t" style="left:773.6500000000001px;width:1000px;text-align:center;top:1510.50px;font-size:21.5px;color:#ececec;font-weight:normal;">All Pages</div>
<div class="t" style="left:1033.3px;width:1000px;text-align:center;top:1510.50px;font-size:21.5px;color:#ececec;font-weight:normal;">Page Range</div>
<div class="a" style="left:1040px;top:1550px;width:640px;height:17.7px;overflow:hidden"><div class="a" style="left:104.6px;top:5px;width:186.5px;height:40px;background:#2d2d2d;border:1.5px solid #1f1f1f;border-radius:6px"></div><div class="a" style="left:295px;top:4px;width:24px;height:24px;background:#3a3a3a;border:1.5px solid #222;border-radius:12px"></div><div class="a" style="left:410.5px;top:5px;width:186.7px;height:40px;background:#2d2d2d;border:1.5px solid #1f1f1f;border-radius:6px"></div><div class="a" style="left:601px;top:4px;width:24px;height:24px;background:#3a3a3a;border:1.5px solid #222;border-radius:12px"></div><div class="a" style="left:39px;top:16px;width:10px;height:1.5px;background:#888"></div><div class="a" style="left:371px;top:16px;width:10px;height:1.5px;background:#888"></div></div>
<div class="a" style="left:1302.7px;top:1575px;width:166.70000000000005px;height:40.799999999999955px;background:#3c3c3c;border-radius:6px;border:1.5px solid #1d1d1d;background:linear-gradient(#434343,#3a3a3a);box-shadow:0 1px 0 #3d3d3d"></div>
<div class="t" style="left:886.0500000000002px;width:1000px;text-align:center;top:1585.20px;font-size:21.5px;color:#ececec;font-weight:normal;">Generate</div>
<div class="a" style="left:1490.4px;top:1575px;width:166.5999999999999px;height:40.799999999999955px;background:#3c3c3c;border-radius:6px;border:1.5px solid #1d1d1d;background:linear-gradient(#434343,#3a3a3a);box-shadow:0 1px 0 #3d3d3d"></div>
<div class="t" style="left:1073.7px;width:1000px;text-align:center;top:1585.20px;font-size:21.5px;color:#ececec;font-weight:normal;">Close</div>
<div class="a" style="left:361.5px;top:753.3px;width:1320.5px;height:881.7px;background:transparent;border-radius:11px;border:1.5px solid rgba(150,150,150,0.6)"></div>
</body></html>
